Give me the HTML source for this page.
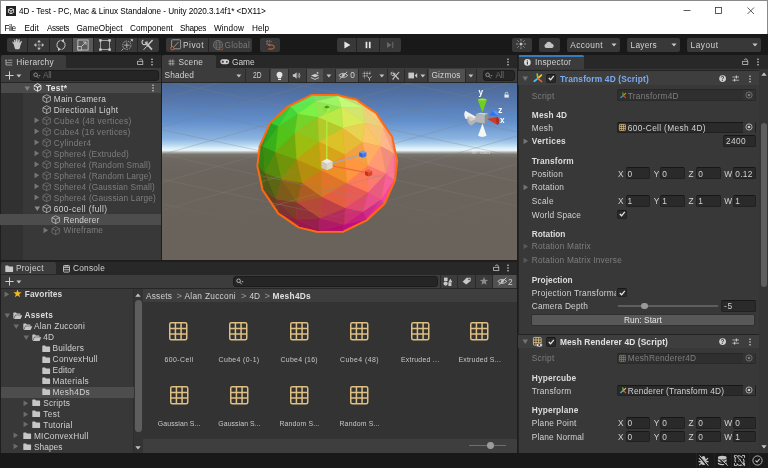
<!DOCTYPE html>
<html><head><meta charset="utf-8"><title>Unity Editor</title>
<style>
html,body{margin:0;padding:0;background:#191919;}
#root{will-change:transform;position:relative;width:768px;height:468px;overflow:hidden;background:#191919;font-family:"Liberation Sans",sans-serif;}
#root div,#root svg{position:absolute;}
#root svg{overflow:visible;display:block;}
.t{white-space:nowrap;}
</style></head>
<body>
<div id="root">
<div style="left:0px;top:0px;width:768px;height:34px;background:#ffffff;"></div>
<div style="left:0px;top:0px;width:768px;height:1px;background:#8a8a8a;"></div>
<div style="left:767px;top:0px;width:1px;height:34px;background:#8a8a8a;"></div>
<div style="left:0px;top:0px;width:1px;height:34px;background:#8a8a8a;"></div>
<svg style="left:5.6px;top:5.9px;" width="10" height="10" viewBox="0 0 10 10"><rect width="10" height="10" fill="#222"/><path d="M5 2.2 L7.6 3.6 L7.6 6.4 L5 7.8 L2.4 6.4 L2.4 3.6 Z M5 5 L5 7.8 M5 5 L2.4 3.6 M5 5 L7.6 3.6" stroke="#fff" stroke-width=".8" fill="none"/></svg>
<div class="t" style="left:19.00px;top:5.70px;font-size:8.2px;line-height:12px;color:#000;letter-spacing:-0.065px;">4D - Test - PC, Mac &amp; Linux Standalone - Unity 2020.3.14f1* &lt;DX11&gt;</div>
<svg style="left:680px;top:4px;" width="84" height="14" viewBox="0 0 84 14"><path d="M3.5 6.5 H10.5" stroke="#333" stroke-width="0.8"/><rect x="35.5" y="3.5" width="6" height="6" fill="none" stroke="#333" stroke-width="0.8"/><path d="M67.5 3.5 L74 10 M74 3.5 L67.5 10" stroke="#333" stroke-width="0.8"/></svg>
<div class="t" style="left:4.50px;top:22.90px;font-size:8.2px;line-height:12px;color:#000;letter-spacing:-0.553px;">File</div>
<div class="t" style="left:24.50px;top:22.90px;font-size:8.2px;line-height:12px;color:#000;letter-spacing:0.092px;">Edit</div>
<div class="t" style="left:47.00px;top:22.90px;font-size:8.2px;line-height:12px;color:#000;letter-spacing:-0.435px;">Assets</div>
<div class="t" style="left:76.50px;top:22.90px;font-size:8.2px;line-height:12px;color:#000;letter-spacing:-0.003px;">GameObject</div>
<div class="t" style="left:130.00px;top:22.90px;font-size:8.2px;line-height:12px;color:#000;letter-spacing:0.067px;">Component</div>
<div class="t" style="left:180.00px;top:22.90px;font-size:8.2px;line-height:12px;color:#000;letter-spacing:-0.302px;">Shapes</div>
<div class="t" style="left:214.00px;top:22.90px;font-size:8.2px;line-height:12px;color:#000;letter-spacing:0.139px;">Window</div>
<div class="t" style="left:252.00px;top:22.90px;font-size:8.2px;line-height:12px;color:#000;letter-spacing:0.034px;">Help</div>
<div style="left:0px;top:34px;width:768px;height:21px;background:#191919;"></div>
<div style="left:6.5px;top:38px;width:152.1px;height:13.6px;background:#383838;border-radius:2px;"></div>
<div style="left:71.8px;top:38px;width:21.7px;height:13.6px;background:#595959;"></div>
<div style="left:27.1px;top:38px;width:0.7px;height:13.5px;background:#242424;"></div>
<div style="left:49.3px;top:38px;width:0.7px;height:13.5px;background:#242424;"></div>
<div style="left:71.5px;top:38px;width:0.7px;height:13.5px;background:#242424;"></div>
<div style="left:93.2px;top:38px;width:0.7px;height:13.5px;background:#242424;"></div>
<div style="left:114.8px;top:38px;width:0.7px;height:13.5px;background:#242424;"></div>
<div style="left:136.9px;top:38px;width:0.7px;height:13.5px;background:#242424;"></div>
<div style="left:166.2px;top:38px;width:86.3px;height:13.6px;background:#383838;border-radius:2px;"></div>
<div style="left:208px;top:38px;width:0.7px;height:13.5px;background:#242424;"></div>
<div class="t" style="left:183.00px;top:38.80px;font-size:8.3px;line-height:12px;color:#d2d2d2;letter-spacing:0.509px;">Pivot</div>
<div class="t" style="left:224.50px;top:38.80px;font-size:8.3px;line-height:12px;color:#7a7a7a;letter-spacing:0.251px;">Global</div>
<div style="left:259.5px;top:38px;width:20px;height:13.5px;background:#383838;border-radius:2px;"></div>
<div style="left:336.5px;top:38px;width:64.5px;height:13.5px;background:#383838;border-radius:2px;"></div>
<div style="left:356.3px;top:38px;width:0.7px;height:13.5px;background:#242424;"></div>
<div style="left:378.8px;top:38px;width:0.7px;height:13.5px;background:#242424;"></div>
<div style="left:511.5px;top:38px;width:20.5px;height:13.5px;background:#383838;border-radius:2px;"></div>
<div style="left:539px;top:38px;width:20.5px;height:13.5px;background:#383838;border-radius:2px;"></div>
<div style="left:566.5px;top:38px;width:53.5px;height:13.5px;background:#383838;border-radius:2px;"></div>
<div style="left:626.5px;top:38px;width:53.5px;height:13.5px;background:#383838;border-radius:2px;"></div>
<div style="left:687px;top:38px;width:74px;height:13.5px;background:#383838;border-radius:2px;"></div>
<div class="t" style="left:570.30px;top:38.80px;font-size:8.3px;line-height:12px;color:#d2d2d2;letter-spacing:0.387px;">Account</div>
<div class="t" style="left:630.50px;top:38.80px;font-size:8.3px;line-height:12px;color:#d2d2d2;letter-spacing:0.265px;">Layers</div>
<div class="t" style="left:690.50px;top:38.80px;font-size:8.3px;line-height:12px;color:#d2d2d2;letter-spacing:0.513px;">Layout</div>
<svg style="left:11.1px;top:38.4px;" width="12" height="12" viewBox="0 0 12 12"><g transform="translate(6 6) scale(1.28 1.1) translate(-5.6 -5.5)"><path d="M3.2 6.2 L2 4.2 Q1.6 3.4 2.4 3.3 L3.4 4.6 L3.3 1.8 Q3.8 1.2 4.3 1.8 L4.6 4.2 L4.9 1.1 Q5.5 .5 6 1.1 L6.1 4.2 L6.8 1.5 Q7.4 1 7.8 1.6 L7.5 4.6 L8.8 2.8 Q9.5 2.6 9.4 3.4 L8.3 6.6 Q8 9 7.3 10.3 L4.3 10.3 Q3.4 8.5 3.2 6.2 Z" fill="#c8c8c8"/></g></svg>
<svg style="left:32.8px;top:38.9px;" width="12" height="12" viewBox="0 0 12 12"><g fill="#b8b8b8" stroke="none"><path d="M6 .8 L7.9 3.2 H4.1Z M6 11.2 L7.9 8.8 H4.1Z M.8 6 L3.2 4.1 V7.9Z M11.2 6 L8.8 4.1 V7.9Z"/></g><path d="M6 3 V9 M3 6 H9" stroke="#b8b8b8" stroke-width=".8" stroke-dasharray="1.1 .7"/></svg>
<svg style="left:54.6px;top:38.9px;" width="12" height="12" viewBox="0 0 12 12"><path d="M5.4 1.3 A5 5 0 0 0 3.8 10 M6.6 10.7 A5 5 0 0 0 8.2 2" stroke="#c4c4c4" stroke-width=".95" fill="none"/><path d="M3 8.3 L6.2 10.3 L3 11.9Z M9 3.7 L5.8 1.7 L9 .1Z" fill="#c4c4c4"/></svg>
<svg style="left:77.1px;top:39px;" width="12" height="12" viewBox="0 0 12 12"><rect x=".9" y="1" width="10.2" height="10" fill="none" stroke="#dedede" stroke-width=".75"/><rect x=".9" y="7.6" width="3.4" height="3.4" fill="#595959" stroke="#dedede" stroke-width=".7"/><path d="M5 7 L8.8 3.2 M6.2 3 H9 V5.8" stroke="#dedede" stroke-width=".8" fill="none"/></svg>
<svg style="left:98.8px;top:39px;" width="12" height="12" viewBox="0 0 12 12"><rect x="1.4" y="1.4" width="9.2" height="9.2" fill="none" stroke="#c4c4c4" stroke-width=".75"/><g fill="#d0d0d0"><rect x=".2" y=".2" width="2.4" height="2.4"/><rect x="9.4" y=".2" width="2.4" height="2.4"/><rect x=".2" y="9.4" width="2.4" height="2.4"/><rect x="9.4" y="9.4" width="2.4" height="2.4"/></g></svg>
<svg style="left:120.6px;top:38.9px;" width="12" height="12" viewBox="0 0 12 12"><circle cx="5.8" cy="6.2" r="4.1" fill="none" stroke="#c4c4c4" stroke-width=".8" stroke-dasharray="1.6 .9"/><path d="M5.8 3.4 V9 M3 6.2 H8.6" stroke="#c4c4c4" stroke-width=".8"/><path d="M.4 11.6 L2.4 9.6 M9.4 2.6 L11.4 .6 M9.6 .5 H11.5 V2.4" stroke="#c4c4c4" stroke-width=".8" fill="none"/></svg>
<svg style="left:142px;top:38.9px;" width="12" height="12" viewBox="0 0 12 12"><path d="M3.2 3.2 L10 10.6" stroke="#c4c4c4" stroke-width="1.7"/><path d="M10.6 1 L4.6 7.4" stroke="#c4c4c4" stroke-width="1.5"/><path d="M4.6 7.4 L1.6 10.8" stroke="#c4c4c4" stroke-width="1"/><path d="M1.4 .9 A2.5 2.5 0 1 0 4.9 2.3" stroke="#c4c4c4" stroke-width="1.15" fill="none"/></svg>
<svg style="left:170px;top:38.8px;" width="12" height="12" viewBox="0 0 12 12"><rect x="1.6" y=".8" width="9" height="9" rx="1" fill="none" stroke="#b0b0b0" stroke-width=".8"/><path d="M3.2 8.6 L8.6 3" stroke="#b0b0b0" stroke-width=".8"/><circle cx="2.3" cy="9.3" r="1.6" fill="#383838" stroke="#e0683a" stroke-width=".9"/></svg>
<svg style="left:211.5px;top:38.8px;" width="12" height="12" viewBox="0 0 12 12"><circle cx="6" cy="6" r="4.6" fill="none" stroke="#777" stroke-width=".8"/><ellipse cx="6" cy="6" rx="2" ry="4.6" fill="none" stroke="#777" stroke-width=".7"/><path d="M1.4 6 H10.6 M2 3.8 H10 M2 8.2 H10" stroke="#777" stroke-width=".6"/><circle cx="9.4" cy="9.6" r="1.4" fill="#383838" stroke="#a0573c" stroke-width=".8"/></svg>
<svg style="left:263.5px;top:38.8px;" width="12" height="12" viewBox="0 0 12 12"><path d="M2 2.6 H8 M2 5 H5 M3.4 1 V6 M5.8 1 V4" stroke="#8a8a8a" stroke-width=".7" stroke-dasharray="1 .6"/><path d="M4.2 10 H8.2 A2 2 0 0 0 8.2 6 H5" stroke="#d8673a" stroke-width="1" fill="none"/><path d="M5.6 4.6 L3.6 6 L5.6 7.4Z" fill="#d8673a"/></svg>
<svg style="left:340.5px;top:38.8px;" width="12" height="12" viewBox="0 0 12 12"><path d="M3.4 2.6 L9.4 6 L3.4 9.4Z" fill="#e6e6e6"/></svg>
<svg style="left:362px;top:38.8px;" width="12" height="12" viewBox="0 0 12 12"><rect x="3.6" y="2.8" width="1.7" height="6.4" fill="#e6e6e6"/><rect x="6.9" y="2.8" width="1.7" height="6.4" fill="#e6e6e6"/></svg>
<svg style="left:384px;top:38.8px;" width="12" height="12" viewBox="0 0 12 12"><path d="M3 3 L7.6 6 L3 9Z" fill="#666"/><rect x="8.2" y="3" width="1.1" height="6" fill="#666"/></svg>
<svg style="left:515.3px;top:38.3px;" width="13" height="13" viewBox="0 0 13 13"><circle cx="6" cy="6" r="1.5" fill="#c4c4c4"/><path d="M6 1 V3.2 M6 8.8 V11 M1 6 H3.2 M8.8 6 H11 M2.5 2.5 L4 4 M8 8 L9.5 9.5 M2.5 9.5 L4 8 M8 4 L9.5 2.5" stroke="#c4c4c4" stroke-width=".85" stroke-dasharray=".9 .45"/></svg>
<svg style="left:543.2px;top:38.8px;" width="12" height="12" viewBox="0 0 12 12"><path d="M3 9 A2.2 2.2 0 0 1 3 4.8 A3 3 0 0 1 8.6 4.4 A2.4 2.4 0 0 1 9.2 9 Z" fill="#c4c4c4"/></svg>
<svg style="left:610.5px;top:42.6px;" width="6" height="4" viewBox="0 0 6 4"><path d="M.4 .4 H5.6 L3 3.6Z" fill="#c4c4c4"/></svg>
<svg style="left:670.8px;top:42.6px;" width="6" height="4" viewBox="0 0 6 4"><path d="M.4 .4 H5.6 L3 3.6Z" fill="#c4c4c4"/></svg>
<svg style="left:751.8px;top:42.6px;" width="6" height="4" viewBox="0 0 6 4"><path d="M.4 .4 H5.6 L3 3.6Z" fill="#c4c4c4"/></svg>
<div style="left:0px;top:55px;width:768px;height:397.8px;background:#1e1e1e;"></div>
<div style="left:0px;top:452.8px;width:768px;height:15.2px;background:#191919;"></div>
<div style="left:0px;top:55px;width:161px;height:13.3px;background:#282828;"></div>
<div style="left:1px;top:55.3px;width:65px;height:13px;background:#3c3c3c;border-radius:2.5px 2.5px 0 0;"></div>
<svg style="left:5.3px;top:58.6px;" width="7.5" height="7.5" viewBox="0 0 7.5 7.5"><path d="M.2 1.2 H2.2 M3.2 1.2 H7.3 M2.2 3.7 H7.3 M2.2 6 H7.3 M1 1.2 V6 H2.2 M1 3.7 H2.2" stroke="#c4c4c4" stroke-width=".7" fill="none"/></svg>
<div class="t" style="left:16.30px;top:56.20px;font-size:8.3px;line-height:12px;color:#d2d2d2;letter-spacing:0.220px;">Hierarchy</div>
<svg style="left:136.9px;top:57.7px;" width="6.6" height="7.2" viewBox="0 0 6.6 7.2"><rect x=".6" y="3.3" width="5.2" height="3.3" fill="none" stroke="#c4c4c4" stroke-width=".8"/><path d="M5.4 3.3 V2.3 A1.6 1.6 0 0 0 2.3 2" fill="none" stroke="#c4c4c4" stroke-width=".8"/></svg>
<svg style="left:150.7px;top:57.5px;" width="2" height="8" viewBox="0 0 2 8"><g fill="#c4c4c4"><rect x=".3" y=".6" width="1.4" height="1.4"/><rect x=".3" y="3.3" width="1.4" height="1.4"/><rect x=".3" y="6" width="1.4" height="1.4"/></g></svg>
<div style="left:0px;top:68.3px;width:161px;height:13.7px;background:#3c3c3c;"></div>
<div style="left:0px;top:82px;width:161px;height:1px;background:#262626;"></div>
<svg style="left:4.7px;top:70.8px;" width="9" height="9" viewBox="0 0 9 9"><path d="M4.5 .4 V8.6 M.4 4.5 H8.6" stroke="#d0d0d0" stroke-width="1"/></svg>
<svg style="left:16.05px;top:73.7px;" width="5.7" height="3.8" viewBox="0 0 6 4"><path d="M.4 .4 H5.6 L3 3.6Z" fill="#c4c4c4"/></svg>
<div style="left:30px;top:69.6px;width:128.5px;height:11px;background:#252525;border-radius:3px;border:0.6px solid #1c1c1c;box-sizing:border-box;"></div>
<svg style="left:33.4px;top:71.9px;" width="8" height="7" viewBox="0 0 8 7"><circle cx="2.6" cy="2.8" r="1.8" fill="none" stroke="#9a9a9a" stroke-width=".9"/><path d="M3.9 4.2 L5.6 6.2" stroke="#9a9a9a" stroke-width=".9"/><path d="M5.4 3.2 H7.6 L6.5 4.6Z" fill="#9a9a9a"/></svg>
<div class="t" style="left:43.00px;top:69.30px;font-size:8.3px;line-height:12px;color:#6a6a6a;letter-spacing:-0.308px;">All</div>
<div style="left:0px;top:83px;width:161px;height:176.8px;background:#383838;"></div>
<div style="left:0px;top:92.8px;width:22.5px;height:167px;background:#313131;"></div>
<div style="left:0px;top:83px;width:161px;height:9.8px;background:#4a4a4a;"></div>
<div style="left:0px;top:55px;width:1px;height:205px;background:#1e1e1e;"></div>
<svg style="left:23.96px;top:85.5px;" width="6.48" height="5.4" viewBox="0 0 6 5"><path d="M.4 .5 H5.6 L3 4.6Z" fill="#7f7f7f"/></svg>
<svg style="left:32.5px;top:83.4px;" width="9.2" height="9.2" viewBox="0 0 10 10"><path d="M5 .7 L8.6 2.7 V7 L5 9 L1.4 7 V2.7Z" fill="none" stroke="#e8e8e8" stroke-width="1"/><path d="M5 4.9 V9 M5 4.9 L1.4 2.7 M5 4.9 L8.6 2.7" stroke="#e8e8e8" stroke-width="1.1"/><path d="M.6 4.9 L3 3.6 V6.2Z" fill="#4a4a4a"/></svg>
<div class="t" style="left:46.00px;top:82.00px;font-size:8.4px;line-height:12px;color:#e4e4e4;letter-spacing:0.316px;font-weight:bold;">Test*</div>
<svg style="left:151.5px;top:84.2px;" width="2" height="8" viewBox="0 0 2 8"><g fill="#c4c4c4"><rect x=".3" y=".6" width="1.4" height="1.4"/><rect x=".3" y="3.3" width="1.4" height="1.4"/><rect x=".3" y="6" width="1.4" height="1.4"/></g></svg>
<div style="left:0px;top:214.22px;width:161px;height:10.6px;background:#4d4d4d;"></div>
<svg style="left:41.8px;top:94.36px;" width="9.4" height="9.4" viewBox="0 0 10 10"><path d="M5 .8 L9 2.8 V7.2 L5 9.2 L1 7.2 V2.8 Z M1 2.8 L5 4.8 L9 2.8 M5 4.8 V9.2" fill="none" stroke="#d0d0d0" stroke-width=".72" stroke-linejoin="round"/></svg>
<div class="t" style="left:53.75px;top:92.96px;font-size:8.3px;line-height:12px;color:#d2d2d2;letter-spacing:0.221px;">Main Camera</div>
<svg style="left:41.8px;top:105.32px;" width="9.4" height="9.4" viewBox="0 0 10 10"><path d="M5 .8 L9 2.8 V7.2 L5 9.2 L1 7.2 V2.8 Z M1 2.8 L5 4.8 L9 2.8 M5 4.8 V9.2" fill="none" stroke="#d0d0d0" stroke-width=".72" stroke-linejoin="round"/></svg>
<div class="t" style="left:53.75px;top:103.92px;font-size:8.3px;line-height:12px;color:#d2d2d2;letter-spacing:0.308px;">Directional Light</div>
<svg style="left:33.8px;top:117.42px;" width="5.6" height="6.72" viewBox="0 0 5 6"><path d="M.5 .4 L4.6 3 L.5 5.6Z" fill="#767676"/></svg>
<svg style="left:41.8px;top:116.28px;" width="9.4" height="9.4" viewBox="0 0 10 10"><path d="M5 .8 L9 2.8 V7.2 L5 9.2 L1 7.2 V2.8 Z M1 2.8 L5 4.8 L9 2.8 M5 4.8 V9.2" fill="none" stroke="#7c7c7c" stroke-width=".72" stroke-linejoin="round"/></svg>
<div class="t" style="left:53.75px;top:114.88px;font-size:8.3px;line-height:12px;color:#7e7e7e;letter-spacing:0.280px;">Cube4 (48 vertices)</div>
<svg style="left:33.8px;top:128.38px;" width="5.6" height="6.72" viewBox="0 0 5 6"><path d="M.5 .4 L4.6 3 L.5 5.6Z" fill="#767676"/></svg>
<svg style="left:41.8px;top:127.24px;" width="9.4" height="9.4" viewBox="0 0 10 10"><path d="M5 .8 L9 2.8 V7.2 L5 9.2 L1 7.2 V2.8 Z M1 2.8 L5 4.8 L9 2.8 M5 4.8 V9.2" fill="none" stroke="#7c7c7c" stroke-width=".72" stroke-linejoin="round"/></svg>
<div class="t" style="left:53.75px;top:125.84px;font-size:8.3px;line-height:12px;color:#7e7e7e;letter-spacing:0.227px;">Cube4 (16 vertices)</div>
<svg style="left:33.8px;top:139.34px;" width="5.6" height="6.72" viewBox="0 0 5 6"><path d="M.5 .4 L4.6 3 L.5 5.6Z" fill="#767676"/></svg>
<svg style="left:41.8px;top:138.2px;" width="9.4" height="9.4" viewBox="0 0 10 10"><path d="M5 .8 L9 2.8 V7.2 L5 9.2 L1 7.2 V2.8 Z M1 2.8 L5 4.8 L9 2.8 M5 4.8 V9.2" fill="none" stroke="#7c7c7c" stroke-width=".72" stroke-linejoin="round"/></svg>
<div class="t" style="left:53.75px;top:136.80px;font-size:8.3px;line-height:12px;color:#7e7e7e;letter-spacing:0.299px;">Cylinder4</div>
<svg style="left:33.8px;top:150.3px;" width="5.6" height="6.72" viewBox="0 0 5 6"><path d="M.5 .4 L4.6 3 L.5 5.6Z" fill="#767676"/></svg>
<svg style="left:41.8px;top:149.16px;" width="9.4" height="9.4" viewBox="0 0 10 10"><path d="M5 .8 L9 2.8 V7.2 L5 9.2 L1 7.2 V2.8 Z M1 2.8 L5 4.8 L9 2.8 M5 4.8 V9.2" fill="none" stroke="#7c7c7c" stroke-width=".72" stroke-linejoin="round"/></svg>
<div class="t" style="left:53.75px;top:147.76px;font-size:8.3px;line-height:12px;color:#7e7e7e;letter-spacing:0.156px;">Sphere4 (Extruded)</div>
<svg style="left:33.8px;top:161.26px;" width="5.6" height="6.72" viewBox="0 0 5 6"><path d="M.5 .4 L4.6 3 L.5 5.6Z" fill="#767676"/></svg>
<svg style="left:41.8px;top:160.12px;" width="9.4" height="9.4" viewBox="0 0 10 10"><path d="M5 .8 L9 2.8 V7.2 L5 9.2 L1 7.2 V2.8 Z M1 2.8 L5 4.8 L9 2.8 M5 4.8 V9.2" fill="none" stroke="#7c7c7c" stroke-width=".72" stroke-linejoin="round"/></svg>
<div class="t" style="left:53.75px;top:158.72px;font-size:8.3px;line-height:12px;color:#7e7e7e;letter-spacing:0.164px;">Sphere4 (Random Small)</div>
<svg style="left:33.8px;top:172.22px;" width="5.6" height="6.72" viewBox="0 0 5 6"><path d="M.5 .4 L4.6 3 L.5 5.6Z" fill="#767676"/></svg>
<svg style="left:41.8px;top:171.08px;" width="9.4" height="9.4" viewBox="0 0 10 10"><path d="M5 .8 L9 2.8 V7.2 L5 9.2 L1 7.2 V2.8 Z M1 2.8 L5 4.8 L9 2.8 M5 4.8 V9.2" fill="none" stroke="#7c7c7c" stroke-width=".72" stroke-linejoin="round"/></svg>
<div class="t" style="left:53.75px;top:169.68px;font-size:8.3px;line-height:12px;color:#7e7e7e;letter-spacing:0.165px;">Sphere4 (Random Large)</div>
<svg style="left:33.8px;top:183.18px;" width="5.6" height="6.72" viewBox="0 0 5 6"><path d="M.5 .4 L4.6 3 L.5 5.6Z" fill="#767676"/></svg>
<svg style="left:41.8px;top:182.04px;" width="9.4" height="9.4" viewBox="0 0 10 10"><path d="M5 .8 L9 2.8 V7.2 L5 9.2 L1 7.2 V2.8 Z M1 2.8 L5 4.8 L9 2.8 M5 4.8 V9.2" fill="none" stroke="#7c7c7c" stroke-width=".72" stroke-linejoin="round"/></svg>
<div class="t" style="left:53.75px;top:180.64px;font-size:8.3px;line-height:12px;color:#7e7e7e;letter-spacing:0.163px;">Sphere4 (Gaussian Small)</div>
<svg style="left:33.8px;top:194.14px;" width="5.6" height="6.72" viewBox="0 0 5 6"><path d="M.5 .4 L4.6 3 L.5 5.6Z" fill="#767676"/></svg>
<svg style="left:41.8px;top:193px;" width="9.4" height="9.4" viewBox="0 0 10 10"><path d="M5 .8 L9 2.8 V7.2 L5 9.2 L1 7.2 V2.8 Z M1 2.8 L5 4.8 L9 2.8 M5 4.8 V9.2" fill="none" stroke="#7c7c7c" stroke-width=".72" stroke-linejoin="round"/></svg>
<div class="t" style="left:53.75px;top:191.60px;font-size:8.3px;line-height:12px;color:#7e7e7e;letter-spacing:0.185px;">Sphere4 (Gaussian Large)</div>
<svg style="left:33.56px;top:206.06px;" width="6.48" height="5.4" viewBox="0 0 6 5"><path d="M.4 .5 H5.6 L3 4.6Z" fill="#8a8a8a"/></svg>
<svg style="left:41.8px;top:203.96px;" width="9.4" height="9.4" viewBox="0 0 10 10"><path d="M5 .8 L9 2.8 V7.2 L5 9.2 L1 7.2 V2.8 Z M1 2.8 L5 4.8 L9 2.8 M5 4.8 V9.2" fill="none" stroke="#d0d0d0" stroke-width=".72" stroke-linejoin="round"/></svg>
<div class="t" style="left:53.75px;top:202.56px;font-size:8.3px;line-height:12px;color:#d2d2d2;letter-spacing:0.416px;">600-cell (full)</div>
<svg style="left:51.4px;top:214.92px;" width="9.4" height="9.4" viewBox="0 0 10 10"><path d="M5 .8 L9 2.8 V7.2 L5 9.2 L1 7.2 V2.8 Z M1 2.8 L5 4.8 L9 2.8 M5 4.8 V9.2" fill="none" stroke="#d0d0d0" stroke-width=".72" stroke-linejoin="round"/></svg>
<div class="t" style="left:63.50px;top:213.52px;font-size:8.3px;line-height:12px;color:#d2d2d2;letter-spacing:0.174px;">Renderer</div>
<svg style="left:43.4px;top:227.02px;" width="5.6" height="6.72" viewBox="0 0 5 6"><path d="M.5 .4 L4.6 3 L.5 5.6Z" fill="#767676"/></svg>
<svg style="left:51.4px;top:225.88px;" width="9.4" height="9.4" viewBox="0 0 10 10"><path d="M5 .8 L9 2.8 V7.2 L5 9.2 L1 7.2 V2.8 Z M1 2.8 L5 4.8 L9 2.8 M5 4.8 V9.2" fill="none" stroke="#7c7c7c" stroke-width=".72" stroke-linejoin="round"/></svg>
<div class="t" style="left:63.50px;top:224.48px;font-size:8.3px;line-height:12px;color:#7e7e7e;letter-spacing:0.136px;">Wireframe</div>
<div style="left:0px;top:261.5px;width:517px;height:13px;background:#282828;"></div>
<div style="left:1px;top:261.7px;width:55px;height:12.8px;background:#3c3c3c;border-radius:2.5px 2.5px 0 0;"></div>
<svg style="left:5px;top:264.9px;" width="8.4" height="7.4" viewBox="0 0 8.4 7.4"><path d="M.3 6.4 V1 Q.3 .4 .9 .4 H3.1 L4 1.5 H7.5 Q8.1 1.5 8.1 2.1 V6.4 Q8.1 7 7.5 7 H.9 Q.3 7 .3 6.4Z" fill="#c8c8c8"/></svg>
<div class="t" style="left:16.00px;top:262.40px;font-size:8.3px;line-height:12px;color:#d2d2d2;letter-spacing:0.281px;">Project</div>
<svg style="left:62.7px;top:264.6px;" width="7" height="7.6" viewBox="0 0 7 7.6"><rect x=".5" y=".5" width="6" height="6.6" rx=".8" fill="none" stroke="#c8c8c8" stroke-width=".9"/><path d="M.5 2.6 H6.5 M.5 4.8 H6.5" stroke="#c8c8c8" stroke-width=".9"/><path d="M1.4 1.1 H5.6" stroke="#c8c8c8" stroke-width=".9"/></svg>
<div class="t" style="left:73.00px;top:262.40px;font-size:8.3px;line-height:12px;color:#d2d2d2;letter-spacing:0.221px;">Console</div>
<svg style="left:493.1px;top:263.9px;" width="6.6" height="7.2" viewBox="0 0 6.6 7.2"><rect x=".6" y="3.3" width="5.2" height="3.3" fill="none" stroke="#c4c4c4" stroke-width=".8"/><path d="M5.4 3.3 V2.3 A1.6 1.6 0 0 0 2.3 2" fill="none" stroke="#c4c4c4" stroke-width=".8"/></svg>
<svg style="left:507px;top:263.6px;" width="2" height="8" viewBox="0 0 2 8"><g fill="#c4c4c4"><rect x=".3" y=".6" width="1.4" height="1.4"/><rect x=".3" y="3.3" width="1.4" height="1.4"/><rect x=".3" y="6" width="1.4" height="1.4"/></g></svg>
<div style="left:0px;top:274.5px;width:517px;height:13.7px;background:#3c3c3c;"></div>
<div style="left:0px;top:288.2px;width:517px;height:0.8px;background:#262626;"></div>
<svg style="left:4.7px;top:277px;" width="9" height="9" viewBox="0 0 9 9"><path d="M4.5 .4 V8.6 M.4 4.5 H8.6" stroke="#d0d0d0" stroke-width="1"/></svg>
<svg style="left:16.05px;top:279.9px;" width="5.7" height="3.8" viewBox="0 0 6 4"><path d="M.4 .4 H5.6 L3 3.6Z" fill="#c4c4c4"/></svg>
<div style="left:232.5px;top:276px;width:205.5px;height:10.6px;background:#252525;border-radius:3px;border:0.6px solid #1c1c1c;box-sizing:border-box;"></div>
<svg style="left:236px;top:277.9px;" width="8" height="7" viewBox="0 0 8 7"><circle cx="2.6" cy="2.8" r="1.8" fill="none" stroke="#c4c4c4" stroke-width=".9"/><path d="M3.9 4.2 L5.6 6.2" stroke="#c4c4c4" stroke-width=".9"/><path d="M5.4 3.2 H7.6 L6.5 4.6Z" fill="#c4c4c4"/></svg>
<div style="left:492.6px;top:275px;width:23.9px;height:13px;background:#505050;"></div>
<div style="left:439.6px;top:275px;width:0.7px;height:13px;background:#2a2a2a;"></div>
<div style="left:457.1px;top:275px;width:0.7px;height:13px;background:#2a2a2a;"></div>
<div style="left:474.9px;top:275px;width:0.7px;height:13px;background:#2a2a2a;"></div>
<div style="left:492.3px;top:275px;width:0.7px;height:13px;background:#2a2a2a;"></div>
<svg style="left:443.2px;top:276.6px;" width="10" height="9.6" viewBox="0 0 10 9.6"><circle cx="2.6" cy="6.6" r="2.1" fill="#c8c8c8"/><rect x="1" y=".6" width="3.6" height="3.4" fill="#c8c8c8"/><path d="M5.4 5.2 L7.4 1.8 L9.4 5.2Z M5.4 5.6 h3 v3.4 h-3z" fill="#c8c8c8"/></svg>
<svg style="left:461.5px;top:277.3px;" width="9.5" height="8" viewBox="0 0 9.5 8"><path d="M.6 4.8 L4.6 .8 H8.6 V4 L4.2 7.6Z" fill="#c8c8c8"/><circle cx="7" cy="2.4" r=".8" fill="#3c3c3c"/></svg>
<svg style="left:478.8px;top:276.4px;" width="10" height="10" viewBox="0 0 10 10"><polygon points="5.00,0.90 6.09,3.80 9.18,3.94 6.76,5.87 7.59,8.86 5.00,7.15 2.41,8.86 3.24,5.87 0.82,3.94 3.91,3.80" fill="#8c8c8c"/></svg>
<svg style="left:496.6px;top:277px;" width="11" height="9" viewBox="0 0 11 9"><path d="M.8 4.4 Q5.2 .2 9.8 4.4 Q5.2 8.6 .8 4.4Z" fill="none" stroke="#c8c8c8" stroke-width=".9"/><circle cx="5.3" cy="4.4" r="1.4" fill="#c8c8c8"/><path d="M1.6 8 L9.2 .8" stroke="#c8c8c8" stroke-width="1"/></svg>
<div class="t" style="left:508.00px;top:275.60px;font-size:8.3px;line-height:12px;color:#d2d2d2;letter-spacing:0.277px;">2</div>
<div style="left:0px;top:289px;width:133.5px;height:163.8px;background:#383838;"></div>
<div style="left:133.5px;top:289px;width:9.5px;height:163.8px;background:#343434;"></div>
<div style="left:133.3px;top:289px;width:0.6px;height:163.8px;background:#2d2d2d;"></div>
<div style="left:142.5px;top:289px;width:0.6px;height:163.8px;background:#2d2d2d;"></div>
<div style="left:0px;top:261.5px;width:1px;height:191px;background:#1e1e1e;"></div>
<div style="left:1px;top:387px;width:132.5px;height:10.6px;background:#4d4d4d;"></div>
<svg style="left:3.5px;top:290.54px;" width="5.6" height="6.72" viewBox="0 0 5 6"><path d="M.5 .4 L4.6 3 L.5 5.6Z" fill="#6c6c6c"/></svg>
<svg style="left:12.6px;top:289.4px;" width="9" height="9" viewBox="0 0 9 9"><polygon points="4.50,0.40 5.56,3.24 8.59,3.37 6.22,5.26 7.03,8.18 4.50,6.51 1.97,8.18 2.78,5.26 0.41,3.37 3.44,3.24" fill="#f5b81e"/></svg>
<div class="t" style="left:24.75px;top:288.00px;font-size:8.3px;line-height:12px;color:#dcdcdc;letter-spacing:0.066px;font-weight:bold;">Favorites</div>
<svg style="left:3.56px;top:312.95px;" width="6.48" height="5.4" viewBox="0 0 6 5"><path d="M.4 .5 H5.6 L3 4.6Z" fill="#6c6c6c"/></svg>
<svg style="left:13px;top:311.75px;" width="9.6" height="7.4" viewBox="0 0 9.6 7.4"><path d="M.3 6.6 V1 Q.3 .4 .9 .4 H3 L3.9 1.4 H7 Q7.5 1.4 7.5 2 V2.7 H2.3 L.6 6.6Z" fill="#c6c6c6"/><path d="M2.6 3.3 H9.3 L7.6 7 H.9Z" fill="#c6c6c6"/></svg>
<div class="t" style="left:24.60px;top:309.45px;font-size:8.3px;line-height:12px;color:#dcdcdc;letter-spacing:0.196px;font-weight:bold;">Assets</div>
<svg style="left:13.06px;top:323.9px;" width="6.48" height="5.4" viewBox="0 0 6 5"><path d="M.4 .5 H5.6 L3 4.6Z" fill="#6c6c6c"/></svg>
<svg style="left:22.5px;top:322.7px;" width="9.6" height="7.4" viewBox="0 0 9.6 7.4"><path d="M.3 6.6 V1 Q.3 .4 .9 .4 H3 L3.9 1.4 H7 Q7.5 1.4 7.5 2 V2.7 H2.3 L.6 6.6Z" fill="#c6c6c6"/><path d="M2.6 3.3 H9.3 L7.6 7 H.9Z" fill="#c6c6c6"/></svg>
<div class="t" style="left:33.94px;top:320.40px;font-size:8.3px;line-height:12px;color:#d2d2d2;letter-spacing:0.257px;">Alan Zucconi</div>
<svg style="left:22.56px;top:334.85px;" width="6.48" height="5.4" viewBox="0 0 6 5"><path d="M.4 .5 H5.6 L3 4.6Z" fill="#6c6c6c"/></svg>
<svg style="left:32px;top:333.65px;" width="9.6" height="7.4" viewBox="0 0 9.6 7.4"><path d="M.3 6.6 V1 Q.3 .4 .9 .4 H3 L3.9 1.4 H7 Q7.5 1.4 7.5 2 V2.7 H2.3 L.6 6.6Z" fill="#c6c6c6"/><path d="M2.6 3.3 H9.3 L7.6 7 H.9Z" fill="#c6c6c6"/></svg>
<div class="t" style="left:43.28px;top:331.35px;font-size:8.3px;line-height:12px;color:#d2d2d2;letter-spacing:0.056px;">4D</div>
<svg style="left:41.5px;top:344.6px;" width="8.4" height="7.4" viewBox="0 0 8.4 7.4"><path d="M.3 6.4 V1 Q.3 .4 .9 .4 H3.1 L4 1.5 H7.5 Q8.1 1.5 8.1 2.1 V6.4 Q8.1 7 7.5 7 H.9 Q.3 7 .3 6.4Z" fill="#c6c6c6"/></svg>
<div class="t" style="left:52.62px;top:342.30px;font-size:8.3px;line-height:12px;color:#d2d2d2;letter-spacing:0.175px;">Builders</div>
<svg style="left:41.5px;top:355.55px;" width="8.4" height="7.4" viewBox="0 0 8.4 7.4"><path d="M.3 6.4 V1 Q.3 .4 .9 .4 H3.1 L4 1.5 H7.5 Q8.1 1.5 8.1 2.1 V6.4 Q8.1 7 7.5 7 H.9 Q.3 7 .3 6.4Z" fill="#c6c6c6"/></svg>
<div class="t" style="left:52.62px;top:353.25px;font-size:8.3px;line-height:12px;color:#d2d2d2;letter-spacing:0.294px;">ConvexHull</div>
<svg style="left:41.5px;top:366.5px;" width="8.4" height="7.4" viewBox="0 0 8.4 7.4"><path d="M.3 6.4 V1 Q.3 .4 .9 .4 H3.1 L4 1.5 H7.5 Q8.1 1.5 8.1 2.1 V6.4 Q8.1 7 7.5 7 H.9 Q.3 7 .3 6.4Z" fill="#c6c6c6"/></svg>
<div class="t" style="left:52.62px;top:364.20px;font-size:8.3px;line-height:12px;color:#d2d2d2;letter-spacing:0.117px;">Editor</div>
<svg style="left:41.5px;top:377.45px;" width="8.4" height="7.4" viewBox="0 0 8.4 7.4"><path d="M.3 6.4 V1 Q.3 .4 .9 .4 H3.1 L4 1.5 H7.5 Q8.1 1.5 8.1 2.1 V6.4 Q8.1 7 7.5 7 H.9 Q.3 7 .3 6.4Z" fill="#c6c6c6"/></svg>
<div class="t" style="left:52.62px;top:375.15px;font-size:8.3px;line-height:12px;color:#d2d2d2;letter-spacing:0.301px;">Materials</div>
<svg style="left:41.5px;top:388.4px;" width="8.4" height="7.4" viewBox="0 0 8.4 7.4"><path d="M.3 6.4 V1 Q.3 .4 .9 .4 H3.1 L4 1.5 H7.5 Q8.1 1.5 8.1 2.1 V6.4 Q8.1 7 7.5 7 H.9 Q.3 7 .3 6.4Z" fill="#c6c6c6"/></svg>
<div class="t" style="left:52.62px;top:386.10px;font-size:8.3px;line-height:12px;color:#d2d2d2;letter-spacing:0.332px;">Mesh4Ds</div>
<svg style="left:22.5px;top:399.59px;" width="5.6" height="6.72" viewBox="0 0 5 6"><path d="M.5 .4 L4.6 3 L.5 5.6Z" fill="#6c6c6c"/></svg>
<svg style="left:32px;top:399.35px;" width="8.4" height="7.4" viewBox="0 0 8.4 7.4"><path d="M.3 6.4 V1 Q.3 .4 .9 .4 H3.1 L4 1.5 H7.5 Q8.1 1.5 8.1 2.1 V6.4 Q8.1 7 7.5 7 H.9 Q.3 7 .3 6.4Z" fill="#c6c6c6"/></svg>
<div class="t" style="left:43.28px;top:397.05px;font-size:8.3px;line-height:12px;color:#d2d2d2;letter-spacing:0.194px;">Scripts</div>
<svg style="left:22.5px;top:410.54px;" width="5.6" height="6.72" viewBox="0 0 5 6"><path d="M.5 .4 L4.6 3 L.5 5.6Z" fill="#6c6c6c"/></svg>
<svg style="left:32px;top:410.3px;" width="8.4" height="7.4" viewBox="0 0 8.4 7.4"><path d="M.3 6.4 V1 Q.3 .4 .9 .4 H3.1 L4 1.5 H7.5 Q8.1 1.5 8.1 2.1 V6.4 Q8.1 7 7.5 7 H.9 Q.3 7 .3 6.4Z" fill="#c6c6c6"/></svg>
<div class="t" style="left:43.28px;top:408.00px;font-size:8.3px;line-height:12px;color:#d2d2d2;letter-spacing:0.375px;">Test</div>
<svg style="left:22.5px;top:421.49px;" width="5.6" height="6.72" viewBox="0 0 5 6"><path d="M.5 .4 L4.6 3 L.5 5.6Z" fill="#6c6c6c"/></svg>
<svg style="left:32px;top:421.25px;" width="8.4" height="7.4" viewBox="0 0 8.4 7.4"><path d="M.3 6.4 V1 Q.3 .4 .9 .4 H3.1 L4 1.5 H7.5 Q8.1 1.5 8.1 2.1 V6.4 Q8.1 7 7.5 7 H.9 Q.3 7 .3 6.4Z" fill="#c6c6c6"/></svg>
<div class="t" style="left:43.28px;top:418.95px;font-size:8.3px;line-height:12px;color:#d2d2d2;letter-spacing:0.232px;">Tutorial</div>
<svg style="left:13px;top:432.44px;" width="5.6" height="6.72" viewBox="0 0 5 6"><path d="M.5 .4 L4.6 3 L.5 5.6Z" fill="#6c6c6c"/></svg>
<svg style="left:22.5px;top:432.2px;" width="8.4" height="7.4" viewBox="0 0 8.4 7.4"><path d="M.3 6.4 V1 Q.3 .4 .9 .4 H3.1 L4 1.5 H7.5 Q8.1 1.5 8.1 2.1 V6.4 Q8.1 7 7.5 7 H.9 Q.3 7 .3 6.4Z" fill="#c6c6c6"/></svg>
<div class="t" style="left:33.94px;top:429.90px;font-size:8.3px;line-height:12px;color:#d2d2d2;letter-spacing:0.242px;">MIConvexHull</div>
<svg style="left:13px;top:443.39px;" width="5.6" height="6.72" viewBox="0 0 5 6"><path d="M.5 .4 L4.6 3 L.5 5.6Z" fill="#6c6c6c"/></svg>
<svg style="left:22.5px;top:443.15px;" width="8.4" height="7.4" viewBox="0 0 8.4 7.4"><path d="M.3 6.4 V1 Q.3 .4 .9 .4 H3.1 L4 1.5 H7.5 Q8.1 1.5 8.1 2.1 V6.4 Q8.1 7 7.5 7 H.9 Q.3 7 .3 6.4Z" fill="#c6c6c6"/></svg>
<div class="t" style="left:33.94px;top:440.85px;font-size:8.3px;line-height:12px;color:#d2d2d2;letter-spacing:0.068px;">Shapes</div>
<div style="left:135px;top:300px;width:7px;height:131.5px;background:#5e5e5e;border-radius:3.5px;"></div>
<svg style="left:135.3px;top:292.5px;" width="6" height="4" viewBox="0 0 6 4"><path d="M.3 3.7 H5.7 L3 .4Z" fill="#c4c4c4"/></svg>
<svg style="left:135.3px;top:445.5px;" width="6" height="4" viewBox="0 0 6 4"><path d="M.3 .3 H5.7 L3 3.6Z" fill="#c4c4c4"/></svg>
<div style="left:143px;top:289px;width:374px;height:163.8px;background:#333333;"></div>
<div style="left:143px;top:289px;width:374px;height:13px;background:#3e3e3e;"></div>
<div style="left:143px;top:438.7px;width:374px;height:14.1px;background:#3e3e3e;"></div>
<div class="t" style="left:146.00px;top:289.50px;font-size:8.3px;line-height:12px;color:#d2d2d2;letter-spacing:0.182px;">Assets</div>
<div class="t" style="left:176.50px;top:289.70px;font-size:9.4px;line-height:12px;color:#9a9a9a;letter-spacing:0.000px;">&gt;</div>
<div class="t" style="left:184.50px;top:289.50px;font-size:8.3px;line-height:12px;color:#d2d2d2;letter-spacing:0.293px;">Alan Zucconi</div>
<div class="t" style="left:241.00px;top:289.70px;font-size:9.4px;line-height:12px;color:#9a9a9a;letter-spacing:0.000px;">&gt;</div>
<div class="t" style="left:249.50px;top:289.50px;font-size:8.3px;line-height:12px;color:#d2d2d2;letter-spacing:-0.055px;">4D</div>
<div class="t" style="left:264.50px;top:289.70px;font-size:9.4px;line-height:12px;color:#9a9a9a;letter-spacing:0.000px;">&gt;</div>
<div class="t" style="left:272.50px;top:289.50px;font-size:8.3px;line-height:12px;color:#e0e0e0;letter-spacing:0.294px;font-weight:bold;">Mesh4Ds</div>
<svg style="left:169.4px;top:322.05px;" width="18.5" height="18.5" viewBox="0 0 18.5 18.5"><rect x="0.75" y="0.75" width="17.00" height="17.00" rx="1.57" fill="#333333" stroke="#dfc084" stroke-width="1.5"/><path d="M6.42 0.75 V17.75 M12.08 0.75 V17.75 M0.75 6.42 H17.75 M0.75 12.08 H17.75" stroke="#dfc084" stroke-width="1.5"/></svg>
<div class="t" style="left:164.61px;top:353.60px;font-size:6.9px;line-height:12px;color:#c8c8c8;letter-spacing:0.413px;">600-Cell</div>
<svg style="left:229.4px;top:322.05px;" width="18.5" height="18.5" viewBox="0 0 18.5 18.5"><rect x="0.75" y="0.75" width="17.00" height="17.00" rx="1.57" fill="#333333" stroke="#dfc084" stroke-width="1.5"/><path d="M6.42 0.75 V17.75 M12.08 0.75 V17.75 M0.75 6.42 H17.75 M0.75 12.08 H17.75" stroke="#dfc084" stroke-width="1.5"/></svg>
<div class="t" style="left:218.59px;top:353.60px;font-size:6.9px;line-height:12px;color:#c8c8c8;letter-spacing:0.380px;">Cube4 (0-1)</div>
<svg style="left:289.6px;top:322.05px;" width="18.5" height="18.5" viewBox="0 0 18.5 18.5"><rect x="0.75" y="0.75" width="17.00" height="17.00" rx="1.57" fill="#333333" stroke="#dfc084" stroke-width="1.5"/><path d="M6.42 0.75 V17.75 M12.08 0.75 V17.75 M0.75 6.42 H17.75 M0.75 12.08 H17.75" stroke="#dfc084" stroke-width="1.5"/></svg>
<div class="t" style="left:280.50px;top:353.60px;font-size:6.9px;line-height:12px;color:#c8c8c8;letter-spacing:0.298px;">Cube4 (16)</div>
<svg style="left:349.9px;top:322.05px;" width="18.5" height="18.5" viewBox="0 0 18.5 18.5"><rect x="0.75" y="0.75" width="17.00" height="17.00" rx="1.57" fill="#333333" stroke="#dfc084" stroke-width="1.5"/><path d="M6.42 0.75 V17.75 M12.08 0.75 V17.75 M0.75 6.42 H17.75 M0.75 12.08 H17.75" stroke="#dfc084" stroke-width="1.5"/></svg>
<div class="t" style="left:340.12px;top:353.60px;font-size:6.9px;line-height:12px;color:#c8c8c8;letter-spacing:0.448px;">Cube4 (48)</div>
<svg style="left:410.5px;top:322.05px;" width="18.5" height="18.5" viewBox="0 0 18.5 18.5"><rect x="0.75" y="0.75" width="17.00" height="17.00" rx="1.57" fill="#333333" stroke="#dfc084" stroke-width="1.5"/><path d="M6.42 0.75 V17.75 M12.08 0.75 V17.75 M0.75 6.42 H17.75 M0.75 12.08 H17.75" stroke="#dfc084" stroke-width="1.5"/></svg>
<div class="t" style="left:400.88px;top:353.60px;font-size:6.9px;line-height:12px;color:#c8c8c8;letter-spacing:0.268px;">Extruded ...</div>
<svg style="left:470.2px;top:322.05px;" width="18.5" height="18.5" viewBox="0 0 18.5 18.5"><rect x="0.75" y="0.75" width="17.00" height="17.00" rx="1.57" fill="#333333" stroke="#dfc084" stroke-width="1.5"/><path d="M6.42 0.75 V17.75 M12.08 0.75 V17.75 M0.75 6.42 H17.75 M0.75 12.08 H17.75" stroke="#dfc084" stroke-width="1.5"/></svg>
<div class="t" style="left:458.55px;top:353.60px;font-size:6.9px;line-height:12px;color:#c8c8c8;letter-spacing:0.201px;">Extruded S...</div>
<svg style="left:169.55px;top:385.85px;" width="18.5" height="18.5" viewBox="0 0 18.5 18.5"><rect x="0.75" y="0.75" width="17.00" height="17.00" rx="1.57" fill="#333333" stroke="#dfc084" stroke-width="1.5"/><path d="M6.42 0.75 V17.75 M12.08 0.75 V17.75 M0.75 6.42 H17.75 M0.75 12.08 H17.75" stroke="#dfc084" stroke-width="1.5"/></svg>
<div class="t" style="left:157.76px;top:417.60px;font-size:6.9px;line-height:12px;color:#c8c8c8;letter-spacing:0.122px;">Gaussian S...</div>
<svg style="left:229.85px;top:385.85px;" width="18.5" height="18.5" viewBox="0 0 18.5 18.5"><rect x="0.75" y="0.75" width="17.00" height="17.00" rx="1.57" fill="#333333" stroke="#dfc084" stroke-width="1.5"/><path d="M6.42 0.75 V17.75 M12.08 0.75 V17.75 M0.75 6.42 H17.75 M0.75 12.08 H17.75" stroke="#dfc084" stroke-width="1.5"/></svg>
<div class="t" style="left:218.29px;top:417.60px;font-size:6.9px;line-height:12px;color:#c8c8c8;letter-spacing:0.083px;">Gaussian S...</div>
<svg style="left:289.75px;top:385.85px;" width="18.5" height="18.5" viewBox="0 0 18.5 18.5"><rect x="0.75" y="0.75" width="17.00" height="17.00" rx="1.57" fill="#333333" stroke="#dfc084" stroke-width="1.5"/><path d="M6.42 0.75 V17.75 M12.08 0.75 V17.75 M0.75 6.42 H17.75 M0.75 12.08 H17.75" stroke="#dfc084" stroke-width="1.5"/></svg>
<div class="t" style="left:279.47px;top:417.60px;font-size:6.9px;line-height:12px;color:#c8c8c8;letter-spacing:0.150px;">Random S...</div>
<svg style="left:349.95px;top:385.85px;" width="18.5" height="18.5" viewBox="0 0 18.5 18.5"><rect x="0.75" y="0.75" width="17.00" height="17.00" rx="1.57" fill="#333333" stroke="#dfc084" stroke-width="1.5"/><path d="M6.42 0.75 V17.75 M12.08 0.75 V17.75 M0.75 6.42 H17.75 M0.75 12.08 H17.75" stroke="#dfc084" stroke-width="1.5"/></svg>
<div class="t" style="left:339.45px;top:417.60px;font-size:6.9px;line-height:12px;color:#c8c8c8;letter-spacing:0.195px;">Random S...</div>
<div style="left:468.5px;top:445.3px;width:37.5px;height:0.9px;background:#6e6e6e;"></div>
<div style="left:487.2px;top:442.4px;width:6.8px;height:6.8px;background:#9c9c9c;border-radius:50%;"></div>
<div style="left:162px;top:55px;width:355px;height:13.3px;background:#282828;"></div>
<div style="left:162px;top:55.3px;width:54px;height:13px;background:#3c3c3c;border-radius:2.5px 2.5px 0 0;"></div>
<svg style="left:168.2px;top:58.6px;" width="7" height="7" viewBox="0 0 7 7"><path d="M2.2 .4 V6.6 M4.8 .4 V6.6 M.4 2.2 H6.6 M.4 4.8 H6.6" stroke="#c4c4c4" stroke-width=".65"/></svg>
<div class="t" style="left:178.50px;top:56.20px;font-size:8.3px;line-height:12px;color:#d2d2d2;letter-spacing:0.193px;">Scene</div>
<svg style="left:220.3px;top:59.4px;" width="9.6" height="5.6" viewBox="0 0 9.6 5.6"><rect x=".3" y=".3" width="9" height="5" rx="2.5" fill="#d0d0d0"/><path d="M1.6 2.8 H4 M2.8 1.6 V4" stroke="#282828" stroke-width=".8"/><circle cx="6.9" cy="2.8" r=".9" fill="#282828"/></svg>
<div class="t" style="left:232.00px;top:56.20px;font-size:8.3px;line-height:12px;color:#d2d2d2;letter-spacing:-0.026px;">Game</div>
<svg style="left:507px;top:58.3px;" width="2" height="8" viewBox="0 0 2 8"><g fill="#c4c4c4"><rect x=".3" y=".6" width="1.4" height="1.4"/><rect x=".3" y="3.3" width="1.4" height="1.4"/><rect x=".3" y="6" width="1.4" height="1.4"/></g></svg>
<div style="left:162px;top:68.3px;width:355px;height:13.7px;background:#3c3c3c;"></div>
<div style="left:162px;top:82px;width:355px;height:0.8px;background:#262626;"></div>
<div style="left:271px;top:68.8px;width:17px;height:13px;background:#505050;"></div>
<div style="left:306.5px;top:68.8px;width:16px;height:13px;background:#505050;"></div>
<div style="left:335.5px;top:68.8px;width:23.2px;height:13px;background:#505050;"></div>
<div style="left:429px;top:68.8px;width:36px;height:13px;background:#505050;"></div>
<div style="left:244.65px;top:68.8px;width:0.7px;height:13px;background:#2a2a2a;"></div>
<div style="left:268.65px;top:68.8px;width:0.7px;height:13px;background:#2a2a2a;"></div>
<div style="left:287.65px;top:68.8px;width:0.7px;height:13px;background:#2a2a2a;"></div>
<div style="left:306.15px;top:68.8px;width:0.7px;height:13px;background:#2a2a2a;"></div>
<div style="left:335.15px;top:68.8px;width:0.7px;height:13px;background:#2a2a2a;"></div>
<div style="left:358.35px;top:68.8px;width:0.7px;height:13px;background:#2a2a2a;"></div>
<div style="left:386.95px;top:68.8px;width:0.7px;height:13px;background:#2a2a2a;"></div>
<div style="left:403.95px;top:68.8px;width:0.7px;height:13px;background:#2a2a2a;"></div>
<div style="left:427.15px;top:68.8px;width:0.7px;height:13px;background:#2a2a2a;"></div>
<div style="left:464.65px;top:68.8px;width:0.7px;height:13px;background:#2a2a2a;"></div>
<div style="left:475.95px;top:68.8px;width:0.7px;height:13px;background:#2a2a2a;"></div>
<div class="t" style="left:164.60px;top:69.30px;font-size:8.3px;line-height:12px;color:#d2d2d2;letter-spacing:0.147px;">Shaded</div>
<svg style="left:236.15px;top:73.6px;" width="5.7" height="3.8" viewBox="0 0 6 4"><path d="M.4 .4 H5.6 L3 3.6Z" fill="#c4c4c4"/></svg>
<div class="t" style="left:253.00px;top:69.30px;font-size:8.3px;line-height:12px;color:#d2d2d2;letter-spacing:0.000px;transform:scaleX(0.8);transform-origin:0 50%;">2D</div>
<svg style="left:275px;top:70.5px;" width="9" height="10" viewBox="0 0 9 10"><path d="M4.5 .8 A3 3 0 0 1 6.3 6.2 V7 H2.7 V6.2 A3 3 0 0 1 4.5 .8Z" fill="#e6e6e6"/><rect x="3" y="7.6" width="3" height="1.4" fill="#e6e6e6"/></svg>
<svg style="left:292px;top:71px;" width="9" height="9" viewBox="0 0 9 9"><path d="M.8 3.2 H2.4 L4.6 1.2 V7.8 L2.4 5.8 H.8Z" fill="#c8c8c8"/><path d="M5.8 2.8 Q7 4.5 5.8 6.2 M7 1.8 Q8.8 4.5 7 7.2" stroke="#c8c8c8" stroke-width=".8" fill="none"/></svg>
<svg style="left:310px;top:70.8px;" width="10" height="9.4" viewBox="0 0 10 9.4"><path d="M1 4.6 L5 3 L9 4.6 L5 6.2Z" fill="#d0d0d0"/><path d="M1 6.6 L5 8.4 L9 6.6" stroke="#d0d0d0" stroke-width=".9" fill="none"/><path d="M7.6 .4 L8 1.6 L9.2 2 L8 2.4 L7.6 3.6 L7.2 2.4 L6 2 L7.2 1.6Z" fill="#d0d0d0"/></svg>
<svg style="left:326.45px;top:73.6px;" width="5.7" height="3.8" viewBox="0 0 6 4"><path d="M.4 .4 H5.6 L3 3.6Z" fill="#c4c4c4"/></svg>
<svg style="left:338.3px;top:71px;" width="11" height="9" viewBox="0 0 11 9"><path d="M.8 4.4 Q5.2 .2 9.8 4.4 Q5.2 8.6 .8 4.4Z" fill="none" stroke="#c8c8c8" stroke-width=".9"/><circle cx="5.3" cy="4.4" r="1.4" fill="#c8c8c8"/><path d="M1.6 8 L9.2 .8" stroke="#c8c8c8" stroke-width="1"/></svg>
<div class="t" style="left:350.30px;top:69.40px;font-size:8.3px;line-height:12px;color:#d2d2d2;letter-spacing:0.277px;">0</div>
<svg style="left:361.6px;top:70.6px;" width="10" height="10" viewBox="0 0 10 10"><path d="M.6 2.4 H9 M.6 5 H5.4 M2.6 .6 V7.4 M5.2 .6 V5 M7.8 .6 V3.4" stroke="#c8c8c8" stroke-width=".8" stroke-dasharray="1.1 .5"/><path d="M5.6 5.4 L7.4 7.6 V9.6 M9.4 5.4 L7.4 7.6" stroke="#c8c8c8" stroke-width=".9" fill="none"/></svg>
<svg style="left:378.55px;top:73.6px;" width="5.7" height="3.8" viewBox="0 0 6 4"><path d="M.4 .4 H5.6 L3 3.6Z" fill="#c4c4c4"/></svg>
<svg style="left:391px;top:70.8px;" width="9.4" height="9.4" viewBox="0 0 9.4 9.4"><path d="M1.6 1.6 L7.8 8.4" stroke="#c8c8c8" stroke-width="1.4"/><path d="M8.2 1 L3.2 6.4 L1.6 8.6" stroke="#c8c8c8" stroke-width="1.1" fill="none"/><path d="M1.2 .8 A2 2 0 1 0 3.8 1.8" stroke="#c8c8c8" stroke-width=".9" fill="none"/></svg>
<svg style="left:408.3px;top:72px;" width="10" height="7" viewBox="0 0 10 7"><rect x=".4" y=".6" width="5.6" height="5.8" fill="#c8c8c8"/><path d="M6.6 3.5 L9.2 1 V6Z" fill="#c8c8c8"/></svg>
<svg style="left:419.95px;top:73.6px;" width="5.7" height="3.8" viewBox="0 0 6 4"><path d="M.4 .4 H5.6 L3 3.6Z" fill="#c4c4c4"/></svg>
<div class="t" style="left:431.50px;top:69.30px;font-size:8.3px;line-height:12px;color:#d2d2d2;letter-spacing:0.145px;">Gizmos</div>
<svg style="left:467.95px;top:73.6px;" width="5.7" height="3.8" viewBox="0 0 6 4"><path d="M.4 .4 H5.6 L3 3.6Z" fill="#c4c4c4"/></svg>
<div style="left:482.5px;top:69.6px;width:32.5px;height:11px;background:#252525;border-radius:3px;border:0.6px solid #1c1c1c;box-sizing:border-box;"></div>
<svg style="left:485.2px;top:71.9px;" width="8" height="7" viewBox="0 0 8 7"><circle cx="2.6" cy="2.8" r="1.8" fill="none" stroke="#9a9a9a" stroke-width=".9"/><path d="M3.9 4.2 L5.6 6.2" stroke="#9a9a9a" stroke-width=".9"/><path d="M5.4 3.2 H7.6 L6.5 4.6Z" fill="#9a9a9a"/></svg>
<div class="t" style="left:495.50px;top:69.30px;font-size:8.3px;line-height:12px;color:#6a6a6a;letter-spacing:-0.308px;">All</div>
<div style="left:162px;top:82.8px;width:355px;height:177px;background:linear-gradient(to bottom,#4c6894 0%,#5577ae 10%,#628fcb 21.6%,#8cb4e1 31.5%,#b9d8f0 35%,#e1f5fa 37.2%,#e6f4f6 38.1%,#b5b8b6 39%,#7a746e 40.3%,#6e6862 42.8%,#6b645d 50%,#6a635c 100%);"></div>
<svg style="left:162px;top:82.8px;overflow:hidden;" width="355" height="177" viewBox="0 0 355 177"><path d="M0 -11.8 L355 -113.7 M0 16.0 L355 -85.9 M0 43.8 L355 -58.1 M0 71.6 L355 -30.3 M0 99.4 L355 -2.5 M0 127.2 L355 25.3 M0 155.0 L355 53.1 M0 182.8 L355 80.9 M0 210.6 L355 108.7 M0 238.4 L355 136.5 M0 266.2 L355 164.3 M0 294.0 L355 192.1 M0 -101.4 L355 -25.1 M0 -76.7 L355 -0.4 M0 -52.0 L355 24.3 M0 -27.3 L355 49.0 M0 -2.6 L355 73.7 M0 22.1 L355 98.4 M0 46.8 L355 123.1 M0 71.5 L355 147.8 M0 96.2 L355 172.5 M0 120.9 L355 197.2 M0 145.6 L355 221.9 M0 170.3 L355 246.6 " stroke="#808080" stroke-opacity=".42" stroke-width=".75" fill="none"/><defs><linearGradient id="gfade" x1="0" y1="0" x2="0" y2="1"><stop offset="0" stop-color="#6b645d" stop-opacity="0"/><stop offset="1" stop-color="#6a635c" stop-opacity="1"/></linearGradient></defs><rect x="0" y="110" width="355" height="30" fill="url(#gfade)"/><rect x="0" y="140" width="355" height="38" fill="#6a635c"/><polygon points="96.7,83.0 98.9,63.9 109.2,40.7 126.6,24.6 149.8,13.3 175.7,13.4 193.6,17.7 213.3,31.2 228.8,54.3 233.9,77.8 231.7,96.9 221.4,120.1 204.0,136.2 180.8,147.5 154.9,147.4 137.0,143.1 117.3,129.6 101.8,106.5" fill="#ff6a10" stroke="#ff6a10" stroke-width="4.6" stroke-linejoin="round"/><polygon points="149.8,13.3 175.7,13.4 173.3,13.8" fill="#9cde6d" stroke="#9cde6d" stroke-width=".5"/><polygon points="154.9,147.4 180.8,147.5 157.3,147.0" fill="#b90170" stroke="#b90170" stroke-width=".5"/><polygon points="128.9,24.2 149.8,13.3 126.6,24.6" fill="#5ad551" stroke="#5ad551" stroke-width=".5"/><polygon points="228.8,54.3 231.4,70.3 233.9,77.8" fill="#f5858c" stroke="#f5858c" stroke-width=".5"/><polygon points="154.9,147.4 157.3,147.0 137.0,143.1" fill="#9d0559" stroke="#9d0559" stroke-width=".5"/><polygon points="213.3,31.2 220.6,44.1 228.8,54.3" fill="#f9b088" stroke="#f9b088" stroke-width=".5"/><polygon points="128.9,24.2 126.6,24.6 109.2,40.7" fill="#3ec03c" stroke="#3ec03c" stroke-width=".5"/><polygon points="193.6,17.7 200.4,24.1 213.3,31.2" fill="#e5d081" stroke="#e5d081" stroke-width=".5"/><polygon points="101.3,63.5 109.2,40.7 98.9,63.9" fill="#2a941e" stroke="#2a941e" stroke-width=".5"/><polygon points="101.3,63.5 98.9,63.9 96.7,83.0" fill="#2f8517" stroke="#2f8517" stroke-width=".5"/><polygon points="231.7,96.9 233.9,77.8 231.4,70.3" fill="#f26d8e" stroke="#f26d8e" stroke-width=".5"/><polygon points="175.7,13.4 200.4,24.1 193.6,17.7" fill="#c0de78" stroke="#c0de78" stroke-width=".5"/><polygon points="221.4,120.1 231.7,96.9 219.0,116.3" fill="#fa42a2" stroke="#fa42a2" stroke-width=".5"/><polygon points="228.8,54.3 220.6,44.1 231.4,70.3" fill="#f7a08a" stroke="#f7a08a" stroke-width=".5"/><polygon points="204.0,136.2 221.4,120.1 219.0,116.3" fill="#e92b9d" stroke="#e92b9d" stroke-width=".5"/><polygon points="213.3,31.2 200.4,24.1 220.6,44.1" fill="#f4cd86" stroke="#f4cd86" stroke-width=".5"/><polygon points="134.0,136.0 117.3,129.6 137.0,143.1" fill="#88203f" stroke="#88203f" stroke-width=".5"/><polygon points="180.8,147.5 204.0,136.2 181.9,141.4" fill="#bd0f80" stroke="#bd0f80" stroke-width=".5"/><polygon points="103.1,89.8 96.7,83.0 101.8,106.5" fill="#436415" stroke="#436415" stroke-width=".5"/><polygon points="114.2,115.9 101.8,106.5 117.3,129.6" fill="#663f24" stroke="#663f24" stroke-width=".5"/><polygon points="153.5,18.6 175.7,13.4 149.8,13.3" fill="#7cdf61" stroke="#7cdf61" stroke-width=".5"/><polygon points="180.8,147.5 181.9,141.4 157.3,147.0" fill="#b30c74" stroke="#b30c74" stroke-width=".5"/><polygon points="128.9,24.2 153.5,18.6 149.8,13.3" fill="#62e758" stroke="#62e758" stroke-width=".5"/><polygon points="137.0,143.1 157.3,147.0 134.0,136.0" fill="#971751" stroke="#971751" stroke-width=".5"/><polygon points="116.3,43.6 128.9,24.2 109.2,40.7" fill="#34cc34" stroke="#34cc34" stroke-width=".5"/><polygon points="101.3,63.5 96.7,83.0 103.1,89.8" fill="#348413" stroke="#348413" stroke-width=".5"/><polygon points="116.3,43.6 109.2,40.7 101.3,63.5" fill="#27a621" stroke="#27a621" stroke-width=".5"/><polygon points="223.7,90.6 231.7,96.9 231.4,70.3" fill="#fd7893" stroke="#fd7893" stroke-width=".5"/><polygon points="134.0,136.0 114.2,115.9 117.3,129.6" fill="#7b3331" stroke="#7b3331" stroke-width=".5"/><polygon points="114.2,115.9 103.1,89.8 101.8,106.5" fill="#505818" stroke="#505818" stroke-width=".5"/><polygon points="219.0,116.3 231.7,96.9 223.7,90.6" fill="#fa6098" stroke="#fa6098" stroke-width=".5"/><polygon points="175.7,13.4 179.4,24.6 200.4,24.1" fill="#c4fa78" stroke="#c4fa78" stroke-width=".5"/><polygon points="204.0,136.2 219.0,116.3 201.0,128.5" fill="#cf2c89" stroke="#cf2c89" stroke-width=".5"/><polygon points="204.0,136.2 201.0,128.5 181.9,141.4" fill="#c61e82" stroke="#c61e82" stroke-width=".5"/><polygon points="220.6,44.1 218.4,63.2 231.4,70.3" fill="#ffb68b" stroke="#ffb68b" stroke-width=".5"/><polygon points="153.5,18.6 179.4,24.6 175.7,13.4" fill="#9bf567" stroke="#9bf567" stroke-width=".5"/><polygon points="200.4,24.1 203.0,40.1 220.6,44.1" fill="#e9d37a" stroke="#e9d37a" stroke-width=".5"/><polygon points="135.8,31.2 153.5,18.6 128.9,24.2" fill="#5bea4b" stroke="#5bea4b" stroke-width=".5"/><polygon points="134.0,136.0 157.3,147.0 158.0,135.0" fill="#971f4e" stroke="#971f4e" stroke-width=".5"/><polygon points="157.3,147.0 181.9,141.4 158.0,135.0" fill="#ac1c63" stroke="#ac1c63" stroke-width=".5"/><polygon points="135.8,31.2 128.9,24.2 116.3,43.6" fill="#42d837" stroke="#42d837" stroke-width=".5"/><polygon points="113.7,68.9 101.3,63.5 103.1,89.8" fill="#388e11" stroke="#388e11" stroke-width=".5"/><polygon points="223.7,90.6 231.4,70.3 218.4,63.2" fill="#f08d7d" stroke="#f08d7d" stroke-width=".5"/><polygon points="116.3,43.6 101.3,63.5 113.7,68.9" fill="#37b119" stroke="#37b119" stroke-width=".5"/><polygon points="179.4,24.6 203.0,40.1 200.4,24.1" fill="#d2e66d" stroke="#d2e66d" stroke-width=".5"/><polygon points="220.6,44.1 203.0,40.1 218.4,63.2" fill="#f5c477" stroke="#f5c477" stroke-width=".5"/><polygon points="135.3,119.3 114.2,115.9 134.0,136.0" fill="#7c3c2a" stroke="#7c3c2a" stroke-width=".5"/><polygon points="201.0,128.5 219.0,116.3 206.1,109.2" fill="#ed4c88" stroke="#ed4c88" stroke-width=".5"/><polygon points="206.1,109.2 219.0,116.3 223.7,90.6" fill="#e85c80" stroke="#e85c80" stroke-width=".5"/><polygon points="119.8,96.2 103.1,89.8 114.2,115.9" fill="#5b6713" stroke="#5b6713" stroke-width=".5"/><polygon points="181.9,141.4 201.0,128.5 183.1,124.7" fill="#cc3071" stroke="#cc3071" stroke-width=".5"/><polygon points="134.0,136.0 158.0,135.0 135.3,119.3" fill="#903338" stroke="#903338" stroke-width=".5"/><polygon points="153.5,18.6 156.0,34.5 179.4,24.6" fill="#8fe64d" stroke="#8fe64d" stroke-width=".5"/><polygon points="135.8,31.2 156.0,34.5 153.5,18.6" fill="#7cf246" stroke="#7cf246" stroke-width=".5"/><polygon points="158.0,135.0 181.9,141.4 183.1,124.7" fill="#b52c5c" stroke="#b52c5c" stroke-width=".5"/><polygon points="113.7,68.9 103.1,89.8 119.8,96.2" fill="#568a0d" stroke="#568a0d" stroke-width=".5"/><polygon points="135.8,31.2 116.3,43.6 133.0,50.0" fill="#4fc423" stroke="#4fc423" stroke-width=".5"/><polygon points="135.3,119.3 119.8,96.2 114.2,115.9" fill="#7c5b1b" stroke="#7c5b1b" stroke-width=".5"/><polygon points="133.0,50.0 116.3,43.6 113.7,68.9" fill="#51c319" stroke="#51c319" stroke-width=".5"/><polygon points="206.1,109.2 183.1,124.7 201.0,128.5" fill="#de496c" stroke="#de496c" stroke-width=".5"/><polygon points="205.8,82.7 223.7,90.6 218.4,63.2" fill="#ff9a74" stroke="#ff9a74" stroke-width=".5"/><polygon points="179.4,24.6 180.8,45.3 203.0,40.1" fill="#daeb5a" stroke="#daeb5a" stroke-width=".5"/><polygon points="203.0,40.1 200.2,59.3 218.4,63.2" fill="#fac667" stroke="#fac667" stroke-width=".5"/><polygon points="206.1,109.2 223.7,90.6 205.8,82.7" fill="#fb7b70" stroke="#fb7b70" stroke-width=".5"/><polygon points="135.8,31.2 133.0,50.0 156.0,34.5" fill="#75d42a" stroke="#75d42a" stroke-width=".5"/><polygon points="156.0,34.5 180.8,45.3 179.4,24.6" fill="#b9ea47" stroke="#b9ea47" stroke-width=".5"/><polygon points="135.3,119.3 158.0,135.0 159.9,113.7" fill="#b64a38" stroke="#b64a38" stroke-width=".5"/><polygon points="158.0,135.0 183.1,124.7 159.9,113.7" fill="#be4145" stroke="#be4145" stroke-width=".5"/><polygon points="205.8,82.7 218.4,63.2 200.2,59.3" fill="#ffad62" stroke="#ffad62" stroke-width=".5"/><polygon points="180.8,45.3 200.2,59.3 203.0,40.1" fill="#e8d251" stroke="#e8d251" stroke-width=".5"/><polygon points="134.8,76.3 113.7,68.9 119.8,96.2" fill="#71950a" stroke="#71950a" stroke-width=".5"/><polygon points="133.0,50.0 113.7,68.9 134.8,76.3" fill="#6eac0d" stroke="#6eac0d" stroke-width=".5"/><polygon points="140.3,99.7 119.8,96.2 135.3,119.3" fill="#8a6215" stroke="#8a6215" stroke-width=".5"/><polygon points="206.1,109.2 184.5,99.8 183.1,124.7" fill="#e75d56" stroke="#e75d56" stroke-width=".5"/><polygon points="205.8,82.7 184.5,99.8 206.1,109.2" fill="#fd7b57" stroke="#fd7b57" stroke-width=".5"/><polygon points="156.0,34.5 133.0,50.0 157.1,59.0" fill="#8fc51f" stroke="#8fc51f" stroke-width=".5"/><polygon points="135.3,119.3 159.9,113.7 140.3,99.7" fill="#ad5b22" stroke="#ad5b22" stroke-width=".5"/><polygon points="134.8,76.3 119.8,96.2 140.3,99.7" fill="#91890b" stroke="#91890b" stroke-width=".5"/><polygon points="156.0,34.5 157.1,59.0 180.8,45.3" fill="#b2cb2b" stroke="#b2cb2b" stroke-width=".5"/><polygon points="184.5,99.8 159.9,113.7 183.1,124.7" fill="#e35f42" stroke="#e35f42" stroke-width=".5"/><polygon points="200.2,59.3 182.5,71.6 205.8,82.7" fill="#f2a042" stroke="#f2a042" stroke-width=".5"/><polygon points="180.8,45.3 182.5,71.6 200.2,59.3" fill="#e7ba38" stroke="#e7ba38" stroke-width=".5"/><polygon points="133.0,50.0 134.8,76.3 157.1,59.0" fill="#9cbe11" stroke="#9cbe11" stroke-width=".5"/><polygon points="205.8,82.7 182.5,71.6 184.5,99.8" fill="#ff9741" stroke="#ff9741" stroke-width=".5"/><polygon points="180.8,45.3 157.1,59.0 182.5,71.6" fill="#dcc129" stroke="#dcc129" stroke-width=".5"/><polygon points="159.5,87.1 140.3,99.7 159.9,113.7" fill="#cf781c" stroke="#cf781c" stroke-width=".5"/><polygon points="134.8,76.3 140.3,99.7 159.5,87.1" fill="#b58e0d" stroke="#b58e0d" stroke-width=".5"/><polygon points="184.5,99.8 159.5,87.1 159.9,113.7" fill="#df7528" stroke="#df7528" stroke-width=".5"/><polygon points="157.1,59.0 134.8,76.3 159.5,87.1" fill="#bba50f" stroke="#bba50f" stroke-width=".5"/><polygon points="182.5,71.6 159.5,87.1 184.5,99.8" fill="#ee9028" stroke="#ee9028" stroke-width=".5"/><polygon points="157.1,59.0 159.5,87.1 182.5,71.6" fill="#d7a51a" stroke="#d7a51a" stroke-width=".5"/><defs><clipPath id="sphclip"><circle cx="165.3" cy="80.39999999999999" r="69"/></clipPath><linearGradient id="lfade" gradientUnits="userSpaceOnUse" x1="0" y1="84" x2="0" y2="138"><stop offset="0" stop-color="#fff" stop-opacity="0"/><stop offset=".2" stop-color="#fff" stop-opacity="1"/><stop offset=".7" stop-color="#fff" stop-opacity="1"/><stop offset="1" stop-color="#fff" stop-opacity="0"/></linearGradient><mask id="lmask"><rect x="0" y="84" width="355" height="54" fill="url(#lfade)"/></mask></defs><g clip-path="url(#sphclip)"><path d="M0 -11.8 L355 -113.7 M0 16.0 L355 -85.9 M0 43.8 L355 -58.1 M0 71.6 L355 -30.3 M0 99.4 L355 -2.5 M0 127.2 L355 25.3 M0 155.0 L355 53.1 M0 182.8 L355 80.9 M0 210.6 L355 108.7 M0 238.4 L355 136.5 M0 266.2 L355 164.3 M0 294.0 L355 192.1 M0 -101.4 L355 -25.1 M0 -76.7 L355 -0.4 M0 -52.0 L355 24.3 M0 -27.3 L355 49.0 M0 -2.6 L355 73.7 M0 22.1 L355 98.4 M0 46.8 L355 123.1 M0 71.5 L355 147.8 M0 96.2 L355 172.5 M0 120.9 L355 197.2 M0 145.6 L355 221.9 M0 170.3 L355 246.6 " mask="url(#lmask)" stroke="#8a8a8a" stroke-opacity=".5" stroke-width=".7" fill="none"/></g><path d="M164.8 81.8 V27.200000000000003" stroke="#b6ee38" stroke-width="1.3"/><path d="M164.8 81.8 L200.60000000000002 71.39999999999999" stroke="#a8a8a8" stroke-width="1.3"/><path d="M164.8 81.8 L206.39999999999998 89.8" stroke="#f4683a" stroke-width="1.3"/><path d="M161.59999999999997 24.185 L164.89999999999998 22.535 L168.2 24.185 L164.89999999999998 25.67Z" fill="#4c9a20"/><path d="M161.59999999999997 24.185 L164.89999999999998 25.67 V29.3 L161.59999999999997 27.815Z" fill="#8fe03a"/><path d="M168.2 24.185 L164.89999999999998 25.67 V29.3 L168.2 27.815Z" fill="#a6ec48"/><path d="M197.20000000000002 69.22 L200.8 67.42 L204.4 69.22 L200.8 70.84Z" fill="#6a9cff"/><path d="M197.20000000000002 69.22 L200.8 70.84 V74.8 L197.20000000000002 73.18Z" fill="#2f62e2"/><path d="M204.4 69.22 L200.8 70.84 V74.8 L204.4 73.18Z" fill="#3f78f2"/><path d="M203.00000000000003 88.02000000000001 L206.60000000000002 86.22000000000001 L210.20000000000002 88.02000000000001 L206.60000000000002 89.64000000000001Z" fill="#f0603a"/><path d="M203.00000000000003 88.02000000000001 L206.60000000000002 89.64000000000001 V93.60000000000001 L203.00000000000003 91.98000000000002Z" fill="#c8301a"/><path d="M210.20000000000002 88.02000000000001 L206.60000000000002 89.64000000000001 V93.60000000000001 L210.20000000000002 91.98000000000002Z" fill="#dc4424"/><path d="M159.4 78.52 L165.0 75.72 L170.6 78.52 L165.0 81.03999999999999Z" fill="#efece4"/><path d="M159.4 78.52 L165.0 81.03999999999999 V87.19999999999999 L159.4 84.67999999999999Z" fill="#cdc8bb"/><path d="M170.6 78.52 L165.0 81.03999999999999 V87.19999999999999 L170.6 84.67999999999999Z" fill="#dcd8cc"/><path d="M303.3 27.800000000000004 Q301.1 31.800000000000004 303.7 36.0 L315.3 34.6Z" fill="#f2f2f2"/><path d="M305.7 33.6 Q303.5 39.2 309.3 42.6 Q312.7 41.2 315.7 36.800000000000004Z" fill="#b4b4b4"/><path d="M305.7 33.6 Q308.3 32.6 310.90000000000003 34.6 L315.3 35.800000000000004 L308.3 38.2Z" fill="#cfcfcf"/><path d="M315.7 16.800000000000004 Q320.3 14.600000000000001 324.90000000000003 16.800000000000004 L320.5 29.800000000000004Z" fill="#6fcf1c"/><path d="M315.7 16.800000000000004 Q320.3 18.400000000000002 324.90000000000003 16.800000000000004 Q320.3 14.400000000000002 315.7 16.800000000000004Z" fill="#9bea3a"/><path d="M316.0 52.800000000000004 Q320.3 55.0 324.6 52.800000000000004 L320.5 40.6Z" fill="#f6f6f6"/><path d="M314.1 31.000000000000004 L318.3 29.800000000000004 L326.3 30.6 L322.90000000000003 32.0Z" fill="#d4d4d4"/><path d="M314.1 31.000000000000004 L322.90000000000003 32.0 V40.400000000000006 L314.1 39.2Z" fill="#b6b6b6"/><path d="M322.90000000000003 32.0 L326.3 30.6 V38.6 L322.90000000000003 40.400000000000006Z" fill="#8e8e8e"/><path d="M327.1 32.800000000000004 L330.90000000000003 27.6 Q335.90000000000003 26.6 336.7 32.400000000000006Z" fill="#2f74ee"/><path d="M330.90000000000003 27.6 Q335.90000000000003 26.400000000000002 336.7 32.400000000000006 Q332.3 31.6 330.90000000000003 27.6Z" fill="#5a96ff"/><path d="M325.3 36.0 L334.90000000000003 33.800000000000004 Q338.90000000000003 37.2 335.7 42.0Z" fill="#cf3a26"/><path d="M334.90000000000003 33.800000000000004 Q339.1 37.2 335.7 42.0 Q332.90000000000003 38.2 334.90000000000003 33.800000000000004Z" fill="#b02c1c"/></svg>
<div class="t" style="left:478.62px;top:87.00px;font-size:8.2px;line-height:12px;color:#ffffff;letter-spacing:0.000px;font-weight:bold;">y</div>
<div class="t" style="left:498.35px;top:105.20px;font-size:8.2px;line-height:12px;color:#ffffff;letter-spacing:0.000px;font-weight:bold;">z</div>
<div class="t" style="left:499.92px;top:115.30px;font-size:8.2px;line-height:12px;color:#ffffff;letter-spacing:0.000px;font-weight:bold;">x</div>
<svg style="left:503.9px;top:92.2px;" width="5.2" height="5.8" viewBox="0 0 5 5.6"><rect x=".4" y="2.4" width="4.2" height="3" fill="#e8e8e8"/><path d="M1.2 2.6 V1.6 A1.3 1.3 0 0 1 3.8 1.6" stroke="#e8e8e8" stroke-width=".8" fill="none"/></svg>
<svg style="left:471.4px;top:150.2px;" width="7" height="4" viewBox="0 0 7 5"><path d="M0 .8 H6 M0 2.4 H6 M0 4 H6" stroke="#ffffff" stroke-opacity=".55" stroke-width=".7"/></svg>
<div class="t" style="left:480.00px;top:146.00px;font-size:7.8px;line-height:12px;color:rgba(255,255,255,.5);letter-spacing:0.000px;">Iso</div>
<div style="left:518px;top:55px;width:250px;height:13.7px;background:#282828;"></div>
<div style="left:518px;top:55.4px;width:66px;height:13.3px;background:#3c3c3c;border-radius:2.5px 2.5px 0 0;"></div>
<div style="left:518px;top:55.1px;width:66px;height:1.7px;background:#3a79bb;border-radius:2px 2px 0 0;"></div>
<svg style="left:524.4px;top:58.9px;" width="6.8" height="6.8" viewBox="0 0 6.8 6.8"><circle cx="3.4" cy="3.4" r="3.3" fill="#dcdcdc"/><rect x="2.8" y="2.9" width="1.2" height="2.6" fill="#3c3c3c"/><rect x="2.8" y="1.3" width="1.2" height="1.1" fill="#3c3c3c"/></svg>
<div class="t" style="left:535.00px;top:56.20px;font-size:8.3px;line-height:12px;color:#d2d2d2;letter-spacing:0.240px;">Inspector</div>
<svg style="left:742.2px;top:58px;" width="6.6" height="7.2" viewBox="0 0 6.6 7.2"><rect x=".6" y="3.3" width="5.2" height="3.3" fill="none" stroke="#c4c4c4" stroke-width=".8"/><path d="M5.4 3.3 V2.3 A1.6 1.6 0 0 0 2.3 2" fill="none" stroke="#c4c4c4" stroke-width=".8"/></svg>
<svg style="left:756.8px;top:57.8px;" width="2" height="8" viewBox="0 0 2 8"><g fill="#c4c4c4"><rect x=".3" y=".6" width="1.4" height="1.4"/><rect x=".3" y="3.3" width="1.4" height="1.4"/><rect x=".3" y="6" width="1.4" height="1.4"/></g></svg>
<div style="left:518px;top:68.7px;width:250px;height:384.1px;background:#383838;"></div>
<div style="left:518px;top:55px;width:0.8px;height:397.8px;background:#242424;"></div>
<div style="left:759.3px;top:68.7px;width:8.7px;height:384.1px;background:#353535;"></div>
<div style="left:760.6px;top:123.3px;width:6.2px;height:163.4px;background:#5e5e5e;border-radius:3.1px;"></div>
<svg style="left:760.6px;top:71.8px;" width="6" height="4" viewBox="0 0 6 4"><path d="M.3 3.7 H5.7 L3 .4Z" fill="#c4c4c4"/></svg>
<svg style="left:760.6px;top:445px;" width="6" height="4" viewBox="0 0 6 4"><path d="M.3 .3 H5.7 L3 3.6Z" fill="#c4c4c4"/></svg>
<div style="left:518px;top:70.4px;width:241.3px;height:1px;background:#232323;"></div>
<div style="left:518px;top:71.4px;width:241.3px;height:13.4px;background:#3e3e3e;"></div>
<svg style="left:522.46px;top:75.9px;" width="6.48" height="5.4" viewBox="0 0 6 5"><path d="M.4 .5 H5.6 L3 4.6Z" fill="#727272"/></svg>
<svg style="left:532.9px;top:73.3px;" width="9.8" height="9.8" viewBox="0 0 10 10"><g opacity="1" stroke-width="1.7" stroke-linecap="round"><path d="M5 5.4 L1.3 8.4" stroke="#4fc3f7"/><path d="M5 5.4 L4.3 1.2" stroke="#7bd13c"/><path d="M5 5.4 L8.6 2.2" stroke="#f2d21c"/><path d="M5 5.4 L8.6 8.6" stroke="#f0622c"/></g></svg>
<div style="left:546.2px;top:73.8px;width:9.4px;height:9.4px;background:#2a2a2a;border-radius:2px;border:0.7px solid #212121;border-top-color:#171717;box-sizing:border-box;"></div>
<svg style="left:547.6px;top:75.4px;" width="6.6" height="6" viewBox="0 0 6.6 6"><path d="M.8 3 L2.6 4.8 L5.8 .9" stroke="#e8e8e8" stroke-width="1.25" fill="none"/></svg>
<div class="t" style="left:560.00px;top:72.50px;font-size:8.4px;line-height:12px;color:#7aaaf0;letter-spacing:0.158px;font-weight:bold;">Transform 4D (Script)</div>
<svg style="left:719px;top:74.9px;" width="7.2" height="7.2" viewBox="0 0 7.2 7.2"><circle cx="3.6" cy="3.6" r="3.4" fill="#d0d0d0"/></svg>
<div class="t" style="left:720.55px;top:72.70px;font-size:6.4px;line-height:12px;color:#3e3e3e;letter-spacing:0.000px;font-weight:bold;">?</div>
<svg style="left:732.4px;top:74.9px;" width="7.4" height="7.2" viewBox="0 0 7.4 7.2"><path d="M.4 2 H7 M.4 5.2 H7" stroke="#c8c8c8" stroke-width=".8"/><path d="M4.4 .6 V3.4 M2.6 3.8 V6.6" stroke="#c8c8c8" stroke-width="1.1"/></svg>
<svg style="left:748.7px;top:74.5px;" width="2" height="8" viewBox="0 0 2 8"><g fill="#c4c4c4"><rect x=".3" y=".6" width="1.4" height="1.4"/><rect x=".3" y="3.3" width="1.4" height="1.4"/><rect x=".3" y="6" width="1.4" height="1.4"/></g></svg>
<div class="t" style="left:531.80px;top:89.50px;font-size:8.3px;line-height:12px;color:#7e7e7e;letter-spacing:0.247px;">Script</div>
<div style="left:617.3px;top:89.2px;width:138.3px;height:11.6px;background:#2f2f2f;border-radius:2px;border:0.7px solid #2a2a2a;border-top-color:#262626;box-sizing:border-box;"></div>
<div style="left:743px;top:89.9px;width:12px;height:10.2px;background:#333;"></div>
<svg style="left:745px;top:91px;" width="8" height="8" viewBox="0 0 8 8"><circle cx="4" cy="4" r="3.1" fill="none" stroke="#7c7c7c" stroke-width=".8"/><circle cx="4" cy="4" r="1.3" fill="#7c7c7c"/></svg>
<svg style="left:619.9px;top:91.9px;" width="6.6" height="6.6" viewBox="0 0 10 10"><g opacity="0.75" stroke-width="1.7" stroke-linecap="round"><path d="M5 5.4 L1.3 8.4" stroke="#4fc3f7"/><path d="M5 5.4 L4.3 1.2" stroke="#7bd13c"/><path d="M5 5.4 L8.6 2.2" stroke="#f2d21c"/><path d="M5 5.4 L8.6 8.6" stroke="#f0622c"/></g></svg>
<div class="t" style="left:627.80px;top:89.50px;font-size:8.3px;line-height:12px;color:#7e7e7e;letter-spacing:0.262px;">Transform4D</div>
<div class="t" style="left:531.80px;top:108.90px;font-size:8.3px;line-height:12px;color:#dcdcdc;letter-spacing:0.195px;font-weight:bold;">Mesh 4D</div>
<div class="t" style="left:531.80px;top:121.50px;font-size:8.3px;line-height:12px;color:#d2d2d2;letter-spacing:0.276px;">Mesh</div>
<div style="left:617.3px;top:121.5px;width:138.3px;height:11.9px;background:#2a2a2a;border-radius:2px;border:0.7px solid #212121;border-top-color:#171717;box-sizing:border-box;"></div>
<div style="left:743px;top:122.2px;width:12px;height:10.5px;background:#373737;"></div>
<svg style="left:745px;top:123.45px;" width="8" height="8" viewBox="0 0 8 8"><circle cx="4" cy="4" r="3.1" fill="none" stroke="#c8c8c8" stroke-width=".8"/><circle cx="4" cy="4" r="1.3" fill="#c8c8c8"/></svg>
<svg style="left:619.2px;top:124px;" width="6.8" height="6.8" viewBox="0 0 6.8 6.8"><rect x="0.38" y="0.38" width="6.05" height="6.05" rx="0.58" fill="#2a2a2a" stroke="#dfc084" stroke-width="0.75"/><path d="M2.39 0.38 V6.42 M4.41 0.38 V6.42 M0.38 2.39 H6.42 M0.38 4.41 H6.42" stroke="#dfc084" stroke-width="0.75"/></svg>
<div class="t" style="left:627.80px;top:121.50px;font-size:8.3px;line-height:12px;color:#d2d2d2;letter-spacing:0.347px;">600-Cell (Mesh 4D)</div>
<svg style="left:523.1px;top:137.94px;" width="5.6" height="6.72" viewBox="0 0 5 6"><path d="M.5 .4 L4.6 3 L.5 5.6Z" fill="#747474"/></svg>
<div class="t" style="left:531.80px;top:135.40px;font-size:8.3px;line-height:12px;color:#dcdcdc;letter-spacing:0.295px;font-weight:bold;">Vertices</div>
<div style="left:723.2px;top:135.2px;width:32.6px;height:11.9px;background:#2a2a2a;border-radius:2px;border:0.7px solid #212121;border-top-color:#171717;box-sizing:border-box;"></div>
<div class="t" style="left:725.90px;top:135.30px;font-size:8.3px;line-height:12px;color:#d2d2d2;letter-spacing:0.409px;">2400</div>
<div class="t" style="left:531.80px;top:154.80px;font-size:8.3px;line-height:12px;color:#dcdcdc;letter-spacing:0.168px;font-weight:bold;">Transform</div>
<div class="t" style="left:531.80px;top:167.60px;font-size:8.3px;line-height:12px;color:#d2d2d2;letter-spacing:0.209px;">Position</div>
<div class="t" style="left:618.00px;top:167.50px;font-size:8.3px;line-height:12px;color:#d2d2d2;letter-spacing:0.000px;">X</div>
<div style="left:625.5px;top:167.4px;width:24.5px;height:12px;background:#2a2a2a;border-radius:2px;border:0.7px solid #212121;border-top-color:#171717;box-sizing:border-box;"></div>
<div class="t" style="left:627.40px;top:167.50px;font-size:8.3px;line-height:12px;color:#d2d2d2;letter-spacing:0.323px;">0</div>
<div class="t" style="left:653.80px;top:167.50px;font-size:8.3px;line-height:12px;color:#d2d2d2;letter-spacing:0.000px;">Y</div>
<div style="left:660.4px;top:167.4px;width:24.6px;height:12px;background:#2a2a2a;border-radius:2px;border:0.7px solid #212121;border-top-color:#171717;box-sizing:border-box;"></div>
<div class="t" style="left:662.30px;top:167.50px;font-size:8.3px;line-height:12px;color:#d2d2d2;letter-spacing:0.323px;">0</div>
<div class="t" style="left:688.60px;top:167.50px;font-size:8.3px;line-height:12px;color:#d2d2d2;letter-spacing:0.000px;">Z</div>
<div style="left:696.3px;top:167.4px;width:24.3px;height:12px;background:#2a2a2a;border-radius:2px;border:0.7px solid #212121;border-top-color:#171717;box-sizing:border-box;"></div>
<div class="t" style="left:698.20px;top:167.50px;font-size:8.3px;line-height:12px;color:#d2d2d2;letter-spacing:0.323px;">0</div>
<div class="t" style="left:724.20px;top:167.50px;font-size:8.3px;line-height:12px;color:#d2d2d2;letter-spacing:0.000px;">W</div>
<div style="left:733.4px;top:167.4px;width:22.4px;height:12px;background:#2a2a2a;border-radius:2px;border:0.7px solid #212121;border-top-color:#171717;box-sizing:border-box;"></div>
<div class="t" style="left:735.30px;top:167.50px;font-size:8.3px;line-height:12px;color:#d2d2d2;letter-spacing:0.283px;">0.12</div>
<svg style="left:523.1px;top:183.64px;" width="5.6" height="6.72" viewBox="0 0 5 6"><path d="M.5 .4 L4.6 3 L.5 5.6Z" fill="#747474"/></svg>
<div class="t" style="left:531.80px;top:181.10px;font-size:8.3px;line-height:12px;color:#d2d2d2;letter-spacing:0.161px;">Rotation</div>
<div class="t" style="left:531.80px;top:195.00px;font-size:8.3px;line-height:12px;color:#d2d2d2;letter-spacing:0.247px;">Scale</div>
<div class="t" style="left:618.00px;top:195.00px;font-size:8.3px;line-height:12px;color:#d2d2d2;letter-spacing:0.000px;">X</div>
<div style="left:625.5px;top:195px;width:24.5px;height:11.9px;background:#2a2a2a;border-radius:2px;border:0.7px solid #212121;border-top-color:#171717;box-sizing:border-box;"></div>
<div class="t" style="left:627.40px;top:195.00px;font-size:8.3px;line-height:12px;color:#d2d2d2;letter-spacing:0.323px;">1</div>
<div class="t" style="left:653.80px;top:195.00px;font-size:8.3px;line-height:12px;color:#d2d2d2;letter-spacing:0.000px;">Y</div>
<div style="left:660.4px;top:195px;width:24.6px;height:11.9px;background:#2a2a2a;border-radius:2px;border:0.7px solid #212121;border-top-color:#171717;box-sizing:border-box;"></div>
<div class="t" style="left:662.30px;top:195.00px;font-size:8.3px;line-height:12px;color:#d2d2d2;letter-spacing:0.323px;">1</div>
<div class="t" style="left:688.60px;top:195.00px;font-size:8.3px;line-height:12px;color:#d2d2d2;letter-spacing:0.000px;">Z</div>
<div style="left:696.3px;top:195px;width:24.3px;height:11.9px;background:#2a2a2a;border-radius:2px;border:0.7px solid #212121;border-top-color:#171717;box-sizing:border-box;"></div>
<div class="t" style="left:698.20px;top:195.00px;font-size:8.3px;line-height:12px;color:#d2d2d2;letter-spacing:0.323px;">1</div>
<div class="t" style="left:724.20px;top:195.00px;font-size:8.3px;line-height:12px;color:#d2d2d2;letter-spacing:0.000px;">W</div>
<div style="left:733.4px;top:195px;width:22.4px;height:11.9px;background:#2a2a2a;border-radius:2px;border:0.7px solid #212121;border-top-color:#171717;box-sizing:border-box;"></div>
<div class="t" style="left:735.30px;top:195.00px;font-size:8.3px;line-height:12px;color:#d2d2d2;letter-spacing:0.323px;">1</div>
<div class="t" style="left:531.80px;top:208.70px;font-size:8.3px;line-height:12px;color:#d2d2d2;letter-spacing:0.176px;">World Space</div>
<div style="left:617.2px;top:209.8px;width:9.4px;height:9.4px;background:#2a2a2a;border-radius:2px;border:0.7px solid #212121;border-top-color:#171717;box-sizing:border-box;"></div>
<svg style="left:618.6px;top:211.4px;" width="6.6" height="6" viewBox="0 0 6.6 6"><path d="M.8 3 L2.6 4.8 L5.8 .9" stroke="#e8e8e8" stroke-width="1.25" fill="none"/></svg>
<div class="t" style="left:531.80px;top:228.40px;font-size:8.3px;line-height:12px;color:#dcdcdc;letter-spacing:-0.019px;font-weight:bold;">Rotation</div>
<svg style="left:523.1px;top:242.94px;" width="5.6" height="6.72" viewBox="0 0 5 6"><path d="M.5 .4 L4.6 3 L.5 5.6Z" fill="#585858"/></svg>
<div class="t" style="left:531.80px;top:240.40px;font-size:8.3px;line-height:12px;color:#7e7e7e;letter-spacing:0.226px;">Rotation Matrix</div>
<svg style="left:523.1px;top:256.54px;" width="5.6" height="6.72" viewBox="0 0 5 6"><path d="M.5 .4 L4.6 3 L.5 5.6Z" fill="#585858"/></svg>
<div class="t" style="left:531.80px;top:254.00px;font-size:8.3px;line-height:12px;color:#7e7e7e;letter-spacing:0.211px;">Rotation Matrix Inverse</div>
<div class="t" style="left:531.80px;top:274.40px;font-size:8.3px;line-height:12px;color:#dcdcdc;letter-spacing:0.021px;font-weight:bold;">Projection</div>
<div style="left:531.8px;top:286px;width:84.6px;height:13px;overflow:hidden;">
<div class="t" style="left:0.00px;top:0.60px;font-size:8.3px;line-height:12px;color:#d2d2d2;letter-spacing:0.284px;">Projection Transformation</div>
</div>
<div style="left:617.2px;top:287.9px;width:9.4px;height:9.4px;background:#2a2a2a;border-radius:2px;border:0.7px solid #212121;border-top-color:#171717;box-sizing:border-box;"></div>
<svg style="left:618.6px;top:289.5px;" width="6.6" height="6" viewBox="0 0 6.6 6"><path d="M.8 3 L2.6 4.8 L5.8 .9" stroke="#e8e8e8" stroke-width="1.25" fill="none"/></svg>
<div class="t" style="left:531.80px;top:300.00px;font-size:8.3px;line-height:12px;color:#d2d2d2;letter-spacing:0.185px;">Camera Depth</div>
<div style="left:617.5px;top:305.3px;width:100.5px;height:1.3px;background:#5e5e5e;"></div>
<div style="left:641px;top:302.5px;width:6.8px;height:6.8px;background:#999999;border-radius:50%;"></div>
<div style="left:721.3px;top:299.9px;width:34.3px;height:11.8px;background:#2a2a2a;border-radius:2px;border:0.7px solid #212121;border-top-color:#171717;box-sizing:border-box;"></div>
<div class="t" style="left:723.90px;top:299.90px;font-size:8.3px;line-height:12px;color:#d2d2d2;letter-spacing:0.760px;">-5</div>
<div style="left:531px;top:314.4px;width:224.3px;height:11.7px;background:#585858;border-radius:2px;border:0.6px solid #303030;box-sizing:border-box;"></div>
<div class="t" style="left:623.90px;top:314.40px;font-size:8.3px;line-height:12px;color:#e4e4e4;letter-spacing:0.073px;">Run: Start</div>
<div style="left:518px;top:334.2px;width:241.3px;height:1px;background:#232323;"></div>
<div style="left:518px;top:335.2px;width:241.3px;height:12.8px;background:#3e3e3e;"></div>
<svg style="left:522.46px;top:339.4px;" width="6.48" height="5.4" viewBox="0 0 6 5"><path d="M.4 .5 H5.6 L3 4.6Z" fill="#727272"/></svg>
<svg style="left:533.2px;top:336.8px;" width="8.6" height="8.6" viewBox="0 0 8.6 8.6"><rect x="0.42" y="0.42" width="7.75" height="7.75" rx="0.73" fill="#3e3e3e" stroke="#dfc084" stroke-width="0.85"/><path d="M3.01 0.42 V8.17 M5.59 0.42 V8.17 M0.42 3.01 H8.17 M0.42 5.59 H8.17" stroke="#dfc084" stroke-width="0.85"/></svg>
<svg style="left:536.4px;top:342.5px;" width="6.6" height="4.2" viewBox="0 0 6.6 4.2"><ellipse cx="3.3" cy="2.1" rx="3.1" ry="1.9" fill="#e6e6e6" stroke="#3e3e3e" stroke-width=".5"/><circle cx="3.3" cy="2.1" r="1" fill="#333"/></svg>
<div style="left:546.2px;top:337.3px;width:9.4px;height:9.4px;background:#2a2a2a;border-radius:2px;border:0.7px solid #212121;border-top-color:#171717;box-sizing:border-box;"></div>
<svg style="left:547.6px;top:338.9px;" width="6.6" height="6" viewBox="0 0 6.6 6"><path d="M.8 3 L2.6 4.8 L5.8 .9" stroke="#e8e8e8" stroke-width="1.25" fill="none"/></svg>
<div class="t" style="left:560.00px;top:336.00px;font-size:8.4px;line-height:12px;color:#e2e2e2;letter-spacing:0.112px;font-weight:bold;">Mesh Renderer 4D (Script)</div>
<svg style="left:719px;top:338.4px;" width="7.2" height="7.2" viewBox="0 0 7.2 7.2"><circle cx="3.6" cy="3.6" r="3.4" fill="#d0d0d0"/></svg>
<div class="t" style="left:720.55px;top:336.20px;font-size:6.4px;line-height:12px;color:#3e3e3e;letter-spacing:0.000px;font-weight:bold;">?</div>
<svg style="left:732.4px;top:338.4px;" width="7.4" height="7.2" viewBox="0 0 7.4 7.2"><path d="M.4 2 H7 M.4 5.2 H7" stroke="#c8c8c8" stroke-width=".8"/><path d="M4.4 .6 V3.4 M2.6 3.8 V6.6" stroke="#c8c8c8" stroke-width="1.1"/></svg>
<svg style="left:748.7px;top:338px;" width="2" height="8" viewBox="0 0 2 8"><g fill="#c4c4c4"><rect x=".3" y=".6" width="1.4" height="1.4"/><rect x=".3" y="3.3" width="1.4" height="1.4"/><rect x=".3" y="6" width="1.4" height="1.4"/></g></svg>
<div class="t" style="left:531.80px;top:352.40px;font-size:8.3px;line-height:12px;color:#7e7e7e;letter-spacing:0.247px;">Script</div>
<div style="left:617.3px;top:352.6px;width:138.3px;height:11.6px;background:#2f2f2f;border-radius:2px;border:0.7px solid #2a2a2a;border-top-color:#262626;box-sizing:border-box;"></div>
<div style="left:743px;top:353.3px;width:12px;height:10.2px;background:#333;"></div>
<svg style="left:745px;top:354.4px;" width="8" height="8" viewBox="0 0 8 8"><circle cx="4" cy="4" r="3.1" fill="none" stroke="#7c7c7c" stroke-width=".8"/><circle cx="4" cy="4" r="1.3" fill="#7c7c7c"/></svg>
<svg style="left:619.4px;top:354.8px;" width="6.8" height="6.8" viewBox="0 0 6.8 6.8"><rect x="0.38" y="0.38" width="6.05" height="6.05" rx="0.58" fill="#2f2f2f" stroke="#8f805e" stroke-width="0.75"/><path d="M2.39 0.38 V6.42 M4.41 0.38 V6.42 M0.38 2.39 H6.42 M0.38 4.41 H6.42" stroke="#8f805e" stroke-width="0.75"/></svg>
<div class="t" style="left:627.80px;top:352.40px;font-size:8.3px;line-height:12px;color:#7e7e7e;letter-spacing:0.214px;">MeshRenderer4D</div>
<div class="t" style="left:531.80px;top:372.00px;font-size:8.3px;line-height:12px;color:#dcdcdc;letter-spacing:0.167px;font-weight:bold;">Hypercube</div>
<div class="t" style="left:531.80px;top:384.50px;font-size:8.3px;line-height:12px;color:#d2d2d2;letter-spacing:0.221px;">Transform</div>
<div style="left:617.3px;top:384.5px;width:138.3px;height:11.6px;background:#2a2a2a;border-radius:2px;border:0.7px solid #212121;border-top-color:#171717;box-sizing:border-box;"></div>
<div style="left:743px;top:385.2px;width:12px;height:10.2px;background:#373737;"></div>
<svg style="left:745px;top:386.3px;" width="8" height="8" viewBox="0 0 8 8"><circle cx="4" cy="4" r="3.1" fill="none" stroke="#c8c8c8" stroke-width=".8"/><circle cx="4" cy="4" r="1.3" fill="#c8c8c8"/></svg>
<svg style="left:619.9px;top:386.9px;" width="6.6" height="6.6" viewBox="0 0 10 10"><g opacity="1" stroke-width="1.7" stroke-linecap="round"><path d="M5 5.4 L1.3 8.4" stroke="#4fc3f7"/><path d="M5 5.4 L4.3 1.2" stroke="#7bd13c"/><path d="M5 5.4 L8.6 2.2" stroke="#f2d21c"/><path d="M5 5.4 L8.6 8.6" stroke="#f0622c"/></g></svg>
<div class="t" style="left:627.80px;top:384.50px;font-size:8.3px;line-height:12px;color:#d2d2d2;letter-spacing:0.154px;">Renderer (Transform 4D)</div>
<div class="t" style="left:531.80px;top:404.40px;font-size:8.3px;line-height:12px;color:#dcdcdc;letter-spacing:0.149px;font-weight:bold;">Hyperplane</div>
<div class="t" style="left:531.80px;top:416.70px;font-size:8.3px;line-height:12px;color:#d2d2d2;letter-spacing:0.204px;">Plane Point</div>
<div class="t" style="left:618.00px;top:416.70px;font-size:8.3px;line-height:12px;color:#d2d2d2;letter-spacing:0.000px;">X</div>
<div style="left:625.5px;top:417px;width:24.5px;height:11.6px;background:#2a2a2a;border-radius:2px;border:0.7px solid #212121;border-top-color:#171717;box-sizing:border-box;"></div>
<div class="t" style="left:627.40px;top:416.70px;font-size:8.3px;line-height:12px;color:#d2d2d2;letter-spacing:0.323px;">0</div>
<div class="t" style="left:653.80px;top:416.70px;font-size:8.3px;line-height:12px;color:#d2d2d2;letter-spacing:0.000px;">Y</div>
<div style="left:660.4px;top:417px;width:24.6px;height:11.6px;background:#2a2a2a;border-radius:2px;border:0.7px solid #212121;border-top-color:#171717;box-sizing:border-box;"></div>
<div class="t" style="left:662.30px;top:416.70px;font-size:8.3px;line-height:12px;color:#d2d2d2;letter-spacing:0.323px;">0</div>
<div class="t" style="left:688.60px;top:416.70px;font-size:8.3px;line-height:12px;color:#d2d2d2;letter-spacing:0.000px;">Z</div>
<div style="left:696.3px;top:417px;width:24.3px;height:11.6px;background:#2a2a2a;border-radius:2px;border:0.7px solid #212121;border-top-color:#171717;box-sizing:border-box;"></div>
<div class="t" style="left:698.20px;top:416.70px;font-size:8.3px;line-height:12px;color:#d2d2d2;letter-spacing:0.323px;">0</div>
<div class="t" style="left:724.20px;top:416.70px;font-size:8.3px;line-height:12px;color:#d2d2d2;letter-spacing:0.000px;">W</div>
<div style="left:733.4px;top:417px;width:22.4px;height:11.6px;background:#2a2a2a;border-radius:2px;border:0.7px solid #212121;border-top-color:#171717;box-sizing:border-box;"></div>
<div class="t" style="left:735.30px;top:416.70px;font-size:8.3px;line-height:12px;color:#d2d2d2;letter-spacing:0.323px;">0</div>
<div class="t" style="left:531.80px;top:430.60px;font-size:8.3px;line-height:12px;color:#d2d2d2;letter-spacing:0.168px;">Plane Normal</div>
<div class="t" style="left:618.00px;top:430.60px;font-size:8.3px;line-height:12px;color:#d2d2d2;letter-spacing:0.000px;">X</div>
<div style="left:625.5px;top:430.6px;width:24.5px;height:11.7px;background:#2a2a2a;border-radius:2px;border:0.7px solid #212121;border-top-color:#171717;box-sizing:border-box;"></div>
<div class="t" style="left:627.40px;top:430.60px;font-size:8.3px;line-height:12px;color:#d2d2d2;letter-spacing:0.323px;">0</div>
<div class="t" style="left:653.80px;top:430.60px;font-size:8.3px;line-height:12px;color:#d2d2d2;letter-spacing:0.000px;">Y</div>
<div style="left:660.4px;top:430.6px;width:24.6px;height:11.7px;background:#2a2a2a;border-radius:2px;border:0.7px solid #212121;border-top-color:#171717;box-sizing:border-box;"></div>
<div class="t" style="left:662.30px;top:430.60px;font-size:8.3px;line-height:12px;color:#d2d2d2;letter-spacing:0.323px;">0</div>
<div class="t" style="left:688.60px;top:430.60px;font-size:8.3px;line-height:12px;color:#d2d2d2;letter-spacing:0.000px;">Z</div>
<div style="left:696.3px;top:430.6px;width:24.3px;height:11.7px;background:#2a2a2a;border-radius:2px;border:0.7px solid #212121;border-top-color:#171717;box-sizing:border-box;"></div>
<div class="t" style="left:698.20px;top:430.60px;font-size:8.3px;line-height:12px;color:#d2d2d2;letter-spacing:0.323px;">0</div>
<div class="t" style="left:724.20px;top:430.60px;font-size:8.3px;line-height:12px;color:#d2d2d2;letter-spacing:0.000px;">W</div>
<div style="left:733.4px;top:430.6px;width:22.4px;height:11.7px;background:#2a2a2a;border-radius:2px;border:0.7px solid #212121;border-top-color:#171717;box-sizing:border-box;"></div>
<div class="t" style="left:735.30px;top:430.60px;font-size:8.3px;line-height:12px;color:#d2d2d2;letter-spacing:0.323px;">1</div>
<div style="left:696px;top:453px;width:0.7px;height:15px;background:#212121;"></div>
<div style="left:713.5px;top:453px;width:0.7px;height:15px;background:#212121;"></div>
<div style="left:731px;top:453px;width:0.7px;height:15px;background:#212121;"></div>
<div style="left:749.4px;top:453px;width:0.7px;height:15px;background:#212121;"></div>
<svg style="left:698.4px;top:455.4px;" width="11" height="11" viewBox="0 0 10 10"><ellipse cx="5" cy="5.7" rx="2.7" ry="3.3" fill="#c4c4c4"/><circle cx="5" cy="2.3" r="1.5" fill="#c4c4c4"/><path d="M.8 3 L3 4.6 M9.2 3 L7 4.6 M.5 6 H3 M9.5 6 H7 M1 9.2 L3.2 7.4 M9 9.2 L6.8 7.4" stroke="#c4c4c4" stroke-width="1"/><path d="M.8 .6 L8.8 9.8" stroke="#191919" stroke-width="1.7"/><path d="M1.5 .4 L9.4 9.6" stroke="#c4c4c4" stroke-width=".9"/></svg>
<svg style="left:716.7px;top:455.4px;" width="11" height="11" viewBox="0 0 10 10"><ellipse cx="4.8" cy="2.4" rx="4" ry="1.8" fill="#c4c4c4"/><path d="M.8 3.8 Q4.8 6.6 8.8 3.8 V5.6 Q4.8 8.2 .8 5.6Z M.8 6.8 Q4.8 9.6 8.8 6.8 V8.2 Q4.8 10.6 .8 8.2Z" fill="#c4c4c4"/><path d="M3.4 4.4 L9.4 10" stroke="#191919" stroke-width="2"/><path d="M3.6 3.8 L9.8 9.6" stroke="#c4c4c4" stroke-width=".9"/></svg>
<svg style="left:734.1px;top:455.4px;" width="11" height="11" viewBox="0 0 10 10"><path d="M1.6 6.6 A3.6 3.6 0 0 1 7.6 2.4 M8.4 3.6 A3.6 3.6 0 0 1 2.4 7.8" fill="none" stroke="#c4c4c4" stroke-width="1.1"/><path d="M.4 2.6 V.4 H2.6 M7.4 .4 H9.6 V2.6 M9.6 7.4 V9.6 H7.4 M2.6 9.6 H.4 V7.4" stroke="#c4c4c4" stroke-width=".9" fill="none"/><circle cx="5" cy="5" r="1.3" fill="#c4c4c4"/><path d="M1.6 .6 L8.8 9.8" stroke="#191919" stroke-width="1.7"/><path d="M2.3 .4 L9.4 9.6" stroke="#c4c4c4" stroke-width=".9"/></svg>
<svg style="left:752.2px;top:455.4px;" width="11" height="11" viewBox="0 0 10 10"><circle cx="5" cy="5" r="4.2" fill="none" stroke="#c4c4c4" stroke-width=".8"/><path d="M3.2 5 L4.6 6.4 L7 3.6" stroke="#c4c4c4" stroke-width="1" fill="none"/></svg>
</div>
</body></html>
